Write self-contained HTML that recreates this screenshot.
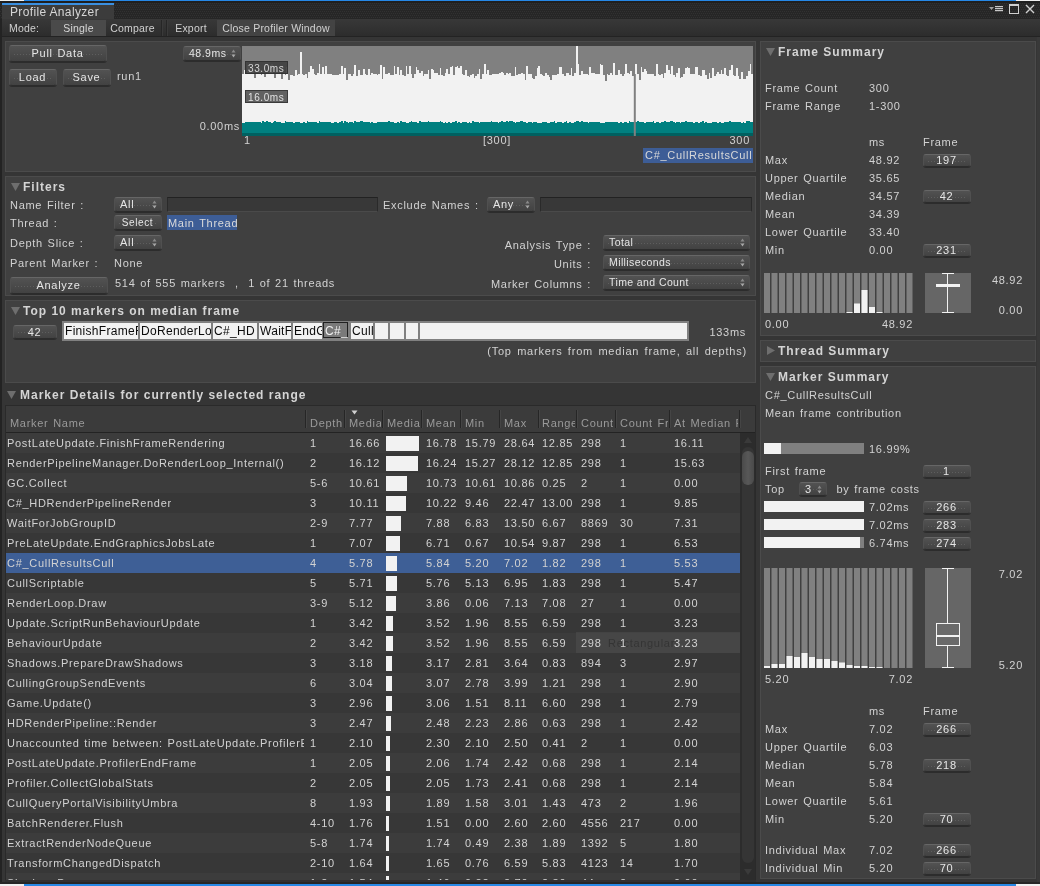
<!DOCTYPE html><html><head><meta charset="utf-8"><style>
*{margin:0;padding:0;box-sizing:border-box}
html,body{width:1040px;height:886px;overflow:hidden;background:#353535}
body{position:relative;font-family:"Liberation Sans",sans-serif}
.r{position:absolute}
.t,.t10,.t10b,.t11b,.t12,.tb,.cell{position:absolute;white-space:pre;font-family:"Liberation Sans",sans-serif}
.t{font-size:11px;line-height:11px;letter-spacing:0.7px;word-spacing:1px}
.t12{font-size:12px;line-height:11px;letter-spacing:0.35px}
.t11b{font-size:10.5px;line-height:11px;letter-spacing:0.2px}
.t10{font-size:10px;line-height:11px;letter-spacing:0.6px}
.t105{position:absolute;white-space:pre;font-size:10.5px;line-height:11px;letter-spacing:0.5px}
.t10b{font-size:10.5px;line-height:11px;letter-spacing:0.4px}
.tb{font-size:12px;line-height:11px;letter-spacing:1.0px;font-weight:bold}
.hdr{overflow:hidden}
.cell{font-size:12px;line-height:16px;overflow:hidden;padding-left:1px;letter-spacing:0.3px}
.panel{position:absolute;border:1px solid #4b4b4b;background:#404040}
.btn{position:absolute;border-radius:3px;background:linear-gradient(#525252,#4a4a4a 50%,#424242);border:1px solid #5a5a5a;border-color:#666 #505050 #2c2c2c #505050;box-shadow:0 1px 0 rgba(0,0,0,0.3)}
.btn::after{content:'';position:absolute;left:4px;right:4px;top:50%;height:1px;background:repeating-linear-gradient(90deg,#5e5e5e 0 1px,transparent 1px 3px)}
.field{position:absolute;background:#383838;border:1px solid #2a2a2a;border-top-color:#222;border-bottom-color:#4a4a4a}
.boxbg{background:#666}
</style></head><body><div id="root" style="position:absolute;left:0;top:0;width:1040px;height:886px;will-change:transform"><div class="r" style="left:0px;top:0px;width:1040px;height:19px;background:#262626;"></div>
<div class="r" style="left:0px;top:0px;width:24px;height:1px;background:#f0f0f0;"></div>
<div class="r" style="left:24px;top:0px;width:992px;height:1px;background:#2688e6;"></div>
<div class="r" style="left:1016px;top:0px;width:24px;height:1px;background:#f0f0f0;"></div>
<div class="r" style="left:0px;top:1px;width:1040px;height:2px;background:#1f1f1f;"></div>
<svg class="r" style="left:0;top:3px" width="1040" height="16"><defs><pattern id="dp" width="4" height="4" patternUnits="userSpaceOnUse"><rect x="0" y="0" width="1" height="1" fill="#313131"/><rect x="2" y="0" width="1" height="1" fill="#313131"/><rect x="1" y="2" width="1" height="1" fill="#313131"/><rect x="3" y="2" width="1" height="1" fill="#313131"/></pattern></defs><rect width="1040" height="16" fill="url(#dp)" shape-rendering="crispEdges"/></svg>
<div class="r" style="left:2px;top:3px;width:112px;height:17px;background:#3c3c3c;"></div>
<div class="r" style="left:2px;top:3px;width:112px;height:2px;background:#3a8fe0;"></div>
<div class="t12" style="left:10px;top:7px;color:#d6d6d6;">Profile Analyzer</div>
<svg class="r" style="left:986px;top:2px" width="52" height="14"><path d="M3 5 L8 5 L5.5 8 Z" fill="#a0a0a0"/><rect x="9" y="4" width="8" height="1.2" fill="#c8c8c8"/><rect x="9" y="6" width="8" height="1.2" fill="#c8c8c8"/><rect x="9" y="8" width="8" height="1.2" fill="#c8c8c8"/><rect x="23.5" y="2.5" width="9" height="9" fill="none" stroke="#d0d0d0" stroke-width="1"/><rect x="23" y="2" width="10" height="2" fill="#d0d0d0"/><path d="M40 3 L48 11 M48 3 L40 11" stroke="#d0d0d0" stroke-width="1.4"/></svg>
<div class="r" style="left:0;top:19px;width:1040px;height:18px;background:linear-gradient(#383838,#2c2c2c)"></div>
<div class="r" style="left:0px;top:36px;width:1040px;height:1px;background:#232323;"></div>
<div class="r" style="left:51px;top:20px;width:55px;height:16px;background:#4a4a4a;"></div>
<div class="r" style="left:217px;top:20px;width:118px;height:16px;background:#434343;"></div>
<div class="r" style="left:161px;top:20px;width:1px;height:16px;background:#262626;"></div>
<div class="r" style="left:162px;top:20px;width:1px;height:16px;background:#3a3a3a;"></div>
<div class="r" style="left:166px;top:20px;width:1px;height:16px;background:#262626;"></div>
<div class="r" style="left:167px;top:20px;width:1px;height:16px;background:#3a3a3a;"></div>
<div class="t11b" style="left:9px;top:23px;color:#d0d0d0;">Mode:</div>
<div class="t11b" style="left:-71.5px;width:300px;text-align:center;top:23px;color:#d8d8d8;">Single</div>
<div class="t11b" style="left:-17.5px;width:300px;text-align:center;top:23px;color:#d0d0d0;">Compare</div>
<div class="t11b" style="left:41px;width:300px;text-align:center;top:23px;color:#d0d0d0;">Export</div>
<div class="t11b" style="left:126px;width:300px;text-align:center;top:23px;color:#d0d0d0;">Close Profiler Window</div>
<div class="r" style="left:0px;top:19px;width:2px;height:867px;background:#232323;"></div>
<div class="r" style="left:1037px;top:37px;width:3px;height:845px;background:#393939;"></div>
<div class="panel" style="left:5px;top:41px;width:751px;height:131px;"></div>
<div class="btn" style="left:9px;top:45px;width:98px;height:17px;"></div>
<div class="t" style="left:-92.5px;width:300px;text-align:center;top:48px;color:#e6e6e6;">Pull Data</div>
<div class="btn" style="left:9px;top:69px;width:48px;height:17px;"></div>
<div class="t" style="left:-117.5px;width:300px;text-align:center;top:72px;color:#e6e6e6;">Load</div>
<div class="btn" style="left:63px;top:69px;width:48px;height:17px;"></div>
<div class="t" style="left:-63.5px;width:300px;text-align:center;top:72px;color:#e6e6e6;">Save</div>
<div class="t" style="left:117px;top:71px;color:#d2d2d2;">run1</div>
<div class="btn" style="left:183px;top:46px;width:58px;height:15px;"></div>
<div class="t105" style="left:189px;top:48px;color:#e6e6e6;">48.9ms</div>
<svg class="r" style="left:230.5px;top:49.0px" width="5" height="9"><path d="M0.5 3.5 L2.5 0.5 L4.5 3.5 Z" fill="#8a8a8a"/><path d="M0.5 5.5 L2.5 8.5 L4.5 5.5 Z" fill="#a8a8a8"/></svg>
<div class="t" style="left:-60px;width:300px;text-align:right;top:121px;color:#d2d2d2;">0.00ms</div>
<div class="r" style="left:242px;top:46px;width:511px;height:90px;background:#808080;"></div>
<svg class="r" style="left:0;top:0" width="1040" height="170"><path d="M242 133 L242.00 73.50 L243.70 73.50 L243.70 69.50 L245.41 69.50 L245.41 73.50 L247.11 73.50 L247.11 64.50 L248.81 64.50 L248.81 65.50 L250.52 65.50 L250.52 73.50 L252.22 73.50 L252.22 69.50 L253.92 69.50 L253.92 77.50 L255.63 77.50 L255.63 72.50 L257.33 72.50 L257.33 73.50 L259.03 73.50 L259.03 69.50 L260.74 69.50 L260.74 74.50 L262.44 74.50 L262.44 73.50 L264.14 73.50 L264.14 76.50 L265.85 76.50 L265.85 73.50 L267.55 73.50 L267.55 73.50 L269.25 73.50 L269.25 64.50 L270.96 64.50 L270.96 63.50 L272.66 63.50 L272.66 73.50 L274.36 73.50 L274.36 77.50 L276.07 77.50 L276.07 70.00 L277.77 70.00 L277.77 74.00 L279.47 74.00 L279.47 73.50 L281.18 73.50 L281.18 79.00 L282.88 79.00 L282.88 73.50 L284.58 73.50 L284.58 74.50 L286.29 74.50 L286.29 66.50 L287.99 66.50 L287.99 79.50 L289.69 79.50 L289.69 74.50 L291.40 74.50 L291.40 74.50 L293.10 74.50 L293.10 75.50 L294.80 75.50 L294.80 69.50 L296.51 69.50 L296.51 74.50 L298.21 74.50 L298.21 74.00 L299.91 74.00 L299.91 52.00 L301.62 52.00 L301.62 73.50 L303.32 73.50 L303.32 74.50 L305.02 74.50 L305.02 74.00 L306.73 74.00 L306.73 77.50 L308.43 77.50 L308.43 71.50 L310.13 71.50 L310.13 66.00 L311.84 66.00 L311.84 68.50 L313.54 68.50 L313.54 73.50 L315.24 73.50 L315.24 74.50 L316.95 74.50 L316.95 72.50 L318.65 72.50 L318.65 64.00 L320.35 64.00 L320.35 74.00 L322.06 74.00 L322.06 66.50 L323.76 66.50 L323.76 74.00 L325.46 74.00 L325.46 65.50 L327.17 65.50 L327.17 73.50 L328.87 73.50 L328.87 73.50 L330.57 73.50 L330.57 73.50 L332.28 73.50 L332.28 74.50 L333.98 74.50 L333.98 74.50 L335.68 74.50 L335.68 74.50 L337.39 74.50 L337.39 74.50 L339.09 74.50 L339.09 73.50 L340.79 73.50 L340.79 66.00 L342.50 66.00 L342.50 73.50 L344.20 73.50 L344.20 67.50 L345.90 67.50 L345.90 79.50 L347.61 79.50 L347.61 74.00 L349.31 74.00 L349.31 73.50 L351.01 73.50 L351.01 75.50 L352.72 75.50 L352.72 74.00 L354.42 74.00 L354.42 64.50 L356.12 64.50 L356.12 75.50 L357.83 75.50 L357.83 69.50 L359.53 69.50 L359.53 74.50 L361.23 74.50 L361.23 74.50 L362.94 74.50 L362.94 68.50 L364.64 68.50 L364.64 73.50 L366.34 73.50 L366.34 74.50 L368.05 74.50 L368.05 68.50 L369.75 68.50 L369.75 74.50 L371.45 74.50 L371.45 72.50 L373.16 72.50 L373.16 73.50 L374.86 73.50 L374.86 74.00 L376.56 74.00 L376.56 74.50 L378.27 74.50 L378.27 74.00 L379.97 74.00 L379.97 64.50 L381.67 64.50 L381.67 78.50 L383.38 78.50 L383.38 66.50 L385.08 66.50 L385.08 73.50 L386.78 73.50 L386.78 73.50 L388.49 73.50 L388.49 72.50 L390.19 72.50 L390.19 74.50 L391.89 74.50 L391.89 74.50 L393.60 74.50 L393.60 65.50 L395.30 65.50 L395.30 73.50 L397.00 73.50 L397.00 66.50 L398.71 66.50 L398.71 74.50 L400.41 74.50 L400.41 69.50 L402.11 69.50 L402.11 74.50 L403.82 74.50 L403.82 75.50 L405.52 75.50 L405.52 65.50 L407.22 65.50 L407.22 73.50 L408.93 73.50 L408.93 65.50 L410.63 65.50 L410.63 73.50 L412.33 73.50 L412.33 77.50 L414.04 77.50 L414.04 73.50 L415.74 73.50 L415.74 66.50 L417.44 66.50 L417.44 69.50 L419.15 69.50 L419.15 72.50 L420.85 72.50 L420.85 70.50 L422.55 70.50 L422.55 75.50 L424.26 75.50 L424.26 73.50 L425.96 73.50 L425.96 73.50 L427.66 73.50 L427.66 69.50 L429.37 69.50 L429.37 78.50 L431.07 78.50 L431.07 68.50 L432.77 68.50 L432.77 69.50 L434.48 69.50 L434.48 72.50 L436.18 72.50 L436.18 72.50 L437.88 72.50 L437.88 74.50 L439.59 74.50 L439.59 67.50 L441.29 67.50 L441.29 74.50 L442.99 74.50 L442.99 75.50 L444.70 75.50 L444.70 72.50 L446.40 72.50 L446.40 68.50 L448.10 68.50 L448.10 73.50 L449.81 73.50 L449.81 66.50 L451.51 66.50 L451.51 65.50 L453.21 65.50 L453.21 74.50 L454.92 74.50 L454.92 67.00 L456.62 67.00 L456.62 65.50 L458.32 65.50 L458.32 67.50 L460.03 67.50 L460.03 65.50 L461.73 65.50 L461.73 73.50 L463.43 73.50 L463.43 74.50 L465.14 74.50 L465.14 69.50 L466.84 69.50 L466.84 75.50 L468.54 75.50 L468.54 76.50 L470.25 76.50 L470.25 74.50 L471.95 74.50 L471.95 73.50 L473.65 73.50 L473.65 77.50 L475.36 77.50 L475.36 75.50 L477.06 75.50 L477.06 73.50 L478.76 73.50 L478.76 68.50 L480.47 68.50 L480.47 78.50 L482.17 78.50 L482.17 73.50 L483.87 73.50 L483.87 64.00 L485.58 64.00 L485.58 73.50 L487.28 73.50 L487.28 70.00 L488.98 70.00 L488.98 74.50 L490.69 74.50 L490.69 74.50 L492.39 74.50 L492.39 74.00 L494.09 74.00 L494.09 74.00 L495.80 74.00 L495.80 73.50 L497.50 73.50 L497.50 73.50 L499.20 73.50 L499.20 72.50 L500.91 72.50 L500.91 71.50 L502.61 71.50 L502.61 72.50 L504.31 72.50 L504.31 74.50 L506.02 74.50 L506.02 72.50 L507.72 72.50 L507.72 73.50 L509.42 73.50 L509.42 72.50 L511.13 72.50 L511.13 75.50 L512.83 75.50 L512.83 75.50 L514.53 75.50 L514.53 66.50 L516.24 66.50 L516.24 74.50 L517.94 74.50 L517.94 73.50 L519.64 73.50 L519.64 74.00 L521.35 74.00 L521.35 72.50 L523.05 72.50 L523.05 74.00 L524.75 74.00 L524.75 79.50 L526.46 79.50 L526.46 65.50 L528.16 65.50 L528.16 73.50 L529.86 73.50 L529.86 73.50 L531.57 73.50 L531.57 77.50 L533.27 77.50 L533.27 78.50 L534.97 78.50 L534.97 75.50 L536.68 75.50 L536.68 67.50 L538.38 67.50 L538.38 65.50 L540.08 65.50 L540.08 73.50 L541.79 73.50 L541.79 74.50 L543.49 74.50 L543.49 75.50 L545.19 75.50 L545.19 72.50 L546.90 72.50 L546.90 74.50 L548.60 74.50 L548.60 76.50 L550.30 76.50 L550.30 79.50 L552.01 79.50 L552.01 74.50 L553.71 74.50 L553.71 74.50 L555.41 74.50 L555.41 74.50 L557.12 74.50 L557.12 74.00 L558.82 74.00 L558.82 66.50 L560.52 66.50 L560.52 66.50 L562.23 66.50 L562.23 73.50 L563.93 73.50 L563.93 75.50 L565.63 75.50 L565.63 72.50 L567.34 72.50 L567.34 72.50 L569.04 72.50 L569.04 74.50 L570.74 74.50 L570.74 67.50 L572.45 67.50 L572.45 75.50 L574.15 75.50 L574.15 72.50 L575.85 72.50 L575.85 46.00 L577.56 46.00 L577.56 63.50 L579.26 63.50 L579.26 74.50 L580.96 74.50 L580.96 70.50 L582.67 70.50 L582.67 73.50 L584.37 73.50 L584.37 73.50 L586.07 73.50 L586.07 73.50 L587.78 73.50 L587.78 74.50 L589.48 74.50 L589.48 66.50 L591.18 66.50 L591.18 72.50 L592.89 72.50 L592.89 72.50 L594.59 72.50 L594.59 73.50 L596.29 73.50 L596.29 74.00 L598.00 74.00 L598.00 73.50 L599.70 73.50 L599.70 63.50 L601.40 63.50 L601.40 64.50 L603.11 64.50 L603.11 74.50 L604.81 74.50 L604.81 80.50 L606.51 80.50 L606.51 73.50 L608.22 73.50 L608.22 74.50 L609.92 74.50 L609.92 72.50 L611.62 72.50 L611.62 74.50 L613.33 74.50 L613.33 62.50 L615.03 62.50 L615.03 74.50 L616.73 74.50 L616.73 74.50 L618.44 74.50 L618.44 69.50 L620.14 69.50 L620.14 73.50 L621.84 73.50 L621.84 75.50 L623.55 75.50 L623.55 73.50 L625.25 73.50 L625.25 63.50 L626.95 63.50 L626.95 72.50 L628.66 72.50 L628.66 73.50 L630.36 73.50 L630.36 70.50 L632.06 70.50 L632.06 75.50 L633.77 75.50 L633.77 133.00 L635.47 133.00 L635.47 63.50 L637.17 63.50 L637.17 73.50 L638.88 73.50 L638.88 79.50 L640.58 79.50 L640.58 66.50 L642.28 66.50 L642.28 71.50 L643.99 71.50 L643.99 68.50 L645.69 68.50 L645.69 70.50 L647.39 70.50 L647.39 73.50 L649.10 73.50 L649.10 73.50 L650.80 73.50 L650.80 73.50 L652.50 73.50 L652.50 74.00 L654.21 74.00 L654.21 75.50 L655.91 75.50 L655.91 64.00 L657.61 64.00 L657.61 73.50 L659.32 73.50 L659.32 74.50 L661.02 74.50 L661.02 73.50 L662.72 73.50 L662.72 77.50 L664.43 77.50 L664.43 72.50 L666.13 72.50 L666.13 64.50 L667.83 64.50 L667.83 69.50 L669.54 69.50 L669.54 73.50 L671.24 73.50 L671.24 65.50 L672.94 65.50 L672.94 74.50 L674.65 74.50 L674.65 76.50 L676.35 76.50 L676.35 72.50 L678.05 72.50 L678.05 68.00 L679.76 68.00 L679.76 77.50 L681.46 77.50 L681.46 76.50 L683.16 76.50 L683.16 73.50 L684.87 73.50 L684.87 67.50 L686.57 67.50 L686.57 66.50 L688.27 66.50 L688.27 67.50 L689.98 67.50 L689.98 73.50 L691.68 73.50 L691.68 74.00 L693.38 74.00 L693.38 73.50 L695.09 73.50 L695.09 66.50 L696.79 66.50 L696.79 66.50 L698.49 66.50 L698.49 74.50 L700.20 74.50 L700.20 75.50 L701.90 75.50 L701.90 69.50 L703.60 69.50 L703.60 70.00 L705.31 70.00 L705.31 74.50 L707.01 74.50 L707.01 78.50 L708.71 78.50 L708.71 72.50 L710.42 72.50 L710.42 77.50 L712.12 77.50 L712.12 67.50 L713.82 67.50 L713.82 75.50 L715.53 75.50 L715.53 73.50 L717.23 73.50 L717.23 71.50 L718.93 71.50 L718.93 73.50 L720.64 73.50 L720.64 69.50 L722.34 69.50 L722.34 73.50 L724.04 73.50 L724.04 67.50 L725.75 67.50 L725.75 74.50 L727.45 74.50 L727.45 75.50 L729.15 75.50 L729.15 69.50 L730.86 69.50 L730.86 64.50 L732.56 64.50 L732.56 74.50 L734.26 74.50 L734.26 75.50 L735.97 75.50 L735.97 68.00 L737.67 68.00 L737.67 75.50 L739.37 75.50 L739.37 78.50 L741.08 78.50 L741.08 71.50 L742.78 71.50 L742.78 78.50 L744.48 78.50 L744.48 78.50 L746.19 78.50 L746.19 75.50 L747.89 75.50 L747.89 71.00 L749.59 71.00 L749.59 64.00 L751.30 64.00 L751.30 74.00 L753.00 74.00 L753 133 Z" fill="#f2f2f2" shape-rendering="crispEdges"/><path d="M242 133 L242.00 123.00 L243.70 123.00 L243.70 123.00 L245.41 123.00 L245.41 122.00 L247.11 122.00 L247.11 122.00 L248.81 122.00 L248.81 122.00 L250.52 122.00 L250.52 122.00 L252.22 122.00 L252.22 122.00 L253.92 122.00 L253.92 122.00 L255.63 122.00 L255.63 122.00 L257.33 122.00 L257.33 122.00 L259.03 122.00 L259.03 122.00 L260.74 122.00 L260.74 123.00 L262.44 123.00 L262.44 121.00 L264.14 121.00 L264.14 122.00 L265.85 122.00 L265.85 121.00 L267.55 121.00 L267.55 122.00 L269.25 122.00 L269.25 122.00 L270.96 122.00 L270.96 123.00 L272.66 123.00 L272.66 122.00 L274.36 122.00 L274.36 121.00 L276.07 121.00 L276.07 122.00 L277.77 122.00 L277.77 122.00 L279.47 122.00 L279.47 122.00 L281.18 122.00 L281.18 123.00 L282.88 123.00 L282.88 123.00 L284.58 123.00 L284.58 121.00 L286.29 121.00 L286.29 122.00 L287.99 122.00 L287.99 122.00 L289.69 122.00 L289.69 122.00 L291.40 122.00 L291.40 122.00 L293.10 122.00 L293.10 123.00 L294.80 123.00 L294.80 122.00 L296.51 122.00 L296.51 122.00 L298.21 122.00 L298.21 122.00 L299.91 122.00 L299.91 123.00 L301.62 123.00 L301.62 123.00 L303.32 123.00 L303.32 122.00 L305.02 122.00 L305.02 123.00 L306.73 123.00 L306.73 121.00 L308.43 121.00 L308.43 122.00 L310.13 122.00 L310.13 122.00 L311.84 122.00 L311.84 122.00 L313.54 122.00 L313.54 122.00 L315.24 122.00 L315.24 122.00 L316.95 122.00 L316.95 123.00 L318.65 123.00 L318.65 121.00 L320.35 121.00 L320.35 122.00 L322.06 122.00 L322.06 122.00 L323.76 122.00 L323.76 122.00 L325.46 122.00 L325.46 122.00 L327.17 122.00 L327.17 122.00 L328.87 122.00 L328.87 122.00 L330.57 122.00 L330.57 123.00 L332.28 123.00 L332.28 123.00 L333.98 123.00 L333.98 122.00 L335.68 122.00 L335.68 122.00 L337.39 122.00 L337.39 123.00 L339.09 123.00 L339.09 122.00 L340.79 122.00 L340.79 121.00 L342.50 121.00 L342.50 123.00 L344.20 123.00 L344.20 121.00 L345.90 121.00 L345.90 122.00 L347.61 122.00 L347.61 123.00 L349.31 123.00 L349.31 122.00 L351.01 122.00 L351.01 122.00 L352.72 122.00 L352.72 123.00 L354.42 123.00 L354.42 121.00 L356.12 121.00 L356.12 122.00 L357.83 122.00 L357.83 122.00 L359.53 122.00 L359.53 121.00 L361.23 121.00 L361.23 121.00 L362.94 121.00 L362.94 122.00 L364.64 122.00 L364.64 122.00 L366.34 122.00 L366.34 122.00 L368.05 122.00 L368.05 122.00 L369.75 122.00 L369.75 123.00 L371.45 123.00 L371.45 122.00 L373.16 122.00 L373.16 123.00 L374.86 123.00 L374.86 123.00 L376.56 123.00 L376.56 122.00 L378.27 122.00 L378.27 122.00 L379.97 122.00 L379.97 122.00 L381.67 122.00 L381.67 122.00 L383.38 122.00 L383.38 122.00 L385.08 122.00 L385.08 122.00 L386.78 122.00 L386.78 122.00 L388.49 122.00 L388.49 121.00 L390.19 121.00 L390.19 122.00 L391.89 122.00 L391.89 122.00 L393.60 122.00 L393.60 123.00 L395.30 123.00 L395.30 123.00 L397.00 123.00 L397.00 122.00 L398.71 122.00 L398.71 123.00 L400.41 123.00 L400.41 121.00 L402.11 121.00 L402.11 122.00 L403.82 122.00 L403.82 122.00 L405.52 122.00 L405.52 123.00 L407.22 123.00 L407.22 123.00 L408.93 123.00 L408.93 122.00 L410.63 122.00 L410.63 121.00 L412.33 121.00 L412.33 122.00 L414.04 122.00 L414.04 122.00 L415.74 122.00 L415.74 122.00 L417.44 122.00 L417.44 123.00 L419.15 123.00 L419.15 121.00 L420.85 121.00 L420.85 122.00 L422.55 122.00 L422.55 122.00 L424.26 122.00 L424.26 122.00 L425.96 122.00 L425.96 122.00 L427.66 122.00 L427.66 121.00 L429.37 121.00 L429.37 122.00 L431.07 122.00 L431.07 122.00 L432.77 122.00 L432.77 122.00 L434.48 122.00 L434.48 122.00 L436.18 122.00 L436.18 122.00 L437.88 122.00 L437.88 122.00 L439.59 122.00 L439.59 121.00 L441.29 121.00 L441.29 122.00 L442.99 122.00 L442.99 123.00 L444.70 123.00 L444.70 122.00 L446.40 122.00 L446.40 123.00 L448.10 123.00 L448.10 122.00 L449.81 122.00 L449.81 123.00 L451.51 123.00 L451.51 122.00 L453.21 122.00 L453.21 122.00 L454.92 122.00 L454.92 121.00 L456.62 121.00 L456.62 123.00 L458.32 123.00 L458.32 122.00 L460.03 122.00 L460.03 123.00 L461.73 123.00 L461.73 122.00 L463.43 122.00 L463.43 122.00 L465.14 122.00 L465.14 122.00 L466.84 122.00 L466.84 123.00 L468.54 123.00 L468.54 122.00 L470.25 122.00 L470.25 123.00 L471.95 123.00 L471.95 121.00 L473.65 121.00 L473.65 122.00 L475.36 122.00 L475.36 122.00 L477.06 122.00 L477.06 122.00 L478.76 122.00 L478.76 123.00 L480.47 123.00 L480.47 122.00 L482.17 122.00 L482.17 122.00 L483.87 122.00 L483.87 122.00 L485.58 122.00 L485.58 122.00 L487.28 122.00 L487.28 122.00 L488.98 122.00 L488.98 122.00 L490.69 122.00 L490.69 121.00 L492.39 121.00 L492.39 122.00 L494.09 122.00 L494.09 122.00 L495.80 122.00 L495.80 122.00 L497.50 122.00 L497.50 123.00 L499.20 123.00 L499.20 122.00 L500.91 122.00 L500.91 121.00 L502.61 121.00 L502.61 122.00 L504.31 122.00 L504.31 122.00 L506.02 122.00 L506.02 121.00 L507.72 121.00 L507.72 122.00 L509.42 122.00 L509.42 121.00 L511.13 121.00 L511.13 121.00 L512.83 121.00 L512.83 122.00 L514.53 122.00 L514.53 123.00 L516.24 123.00 L516.24 122.00 L517.94 122.00 L517.94 122.00 L519.64 122.00 L519.64 121.00 L521.35 121.00 L521.35 121.00 L523.05 121.00 L523.05 122.00 L524.75 122.00 L524.75 122.00 L526.46 122.00 L526.46 123.00 L528.16 123.00 L528.16 122.00 L529.86 122.00 L529.86 122.00 L531.57 122.00 L531.57 123.00 L533.27 123.00 L533.27 122.00 L534.97 122.00 L534.97 122.00 L536.68 122.00 L536.68 123.00 L538.38 123.00 L538.38 123.00 L540.08 123.00 L540.08 123.00 L541.79 123.00 L541.79 122.00 L543.49 122.00 L543.49 122.00 L545.19 122.00 L545.19 122.00 L546.90 122.00 L546.90 123.00 L548.60 123.00 L548.60 123.00 L550.30 123.00 L550.30 122.00 L552.01 122.00 L552.01 122.00 L553.71 122.00 L553.71 121.00 L555.41 121.00 L555.41 123.00 L557.12 123.00 L557.12 122.00 L558.82 122.00 L558.82 122.00 L560.52 122.00 L560.52 122.00 L562.23 122.00 L562.23 123.00 L563.93 123.00 L563.93 122.00 L565.63 122.00 L565.63 121.00 L567.34 121.00 L567.34 123.00 L569.04 123.00 L569.04 122.00 L570.74 122.00 L570.74 123.00 L572.45 123.00 L572.45 123.00 L574.15 123.00 L574.15 122.00 L575.85 122.00 L575.85 121.00 L577.56 121.00 L577.56 121.00 L579.26 121.00 L579.26 122.00 L580.96 122.00 L580.96 121.00 L582.67 121.00 L582.67 122.00 L584.37 122.00 L584.37 122.00 L586.07 122.00 L586.07 122.00 L587.78 122.00 L587.78 123.00 L589.48 123.00 L589.48 122.00 L591.18 122.00 L591.18 122.00 L592.89 122.00 L592.89 122.00 L594.59 122.00 L594.59 122.00 L596.29 122.00 L596.29 122.00 L598.00 122.00 L598.00 122.00 L599.70 122.00 L599.70 123.00 L601.40 123.00 L601.40 123.00 L603.11 123.00 L603.11 123.00 L604.81 123.00 L604.81 122.00 L606.51 122.00 L606.51 122.00 L608.22 122.00 L608.22 122.00 L609.92 122.00 L609.92 122.00 L611.62 122.00 L611.62 122.00 L613.33 122.00 L613.33 122.00 L615.03 122.00 L615.03 122.00 L616.73 122.00 L616.73 122.00 L618.44 122.00 L618.44 123.00 L620.14 123.00 L620.14 122.00 L621.84 122.00 L621.84 123.00 L623.55 123.00 L623.55 122.00 L625.25 122.00 L625.25 122.00 L626.95 122.00 L626.95 123.00 L628.66 123.00 L628.66 121.00 L630.36 121.00 L630.36 122.00 L632.06 122.00 L632.06 122.00 L633.77 122.00 L633.77 133.00 L635.47 133.00 L635.47 122.00 L637.17 122.00 L637.17 121.00 L638.88 121.00 L638.88 122.00 L640.58 122.00 L640.58 122.00 L642.28 122.00 L642.28 122.00 L643.99 122.00 L643.99 123.00 L645.69 123.00 L645.69 122.00 L647.39 122.00 L647.39 122.00 L649.10 122.00 L649.10 122.00 L650.80 122.00 L650.80 122.00 L652.50 122.00 L652.50 121.00 L654.21 121.00 L654.21 123.00 L655.91 123.00 L655.91 122.00 L657.61 122.00 L657.61 122.00 L659.32 122.00 L659.32 123.00 L661.02 123.00 L661.02 122.00 L662.72 122.00 L662.72 122.00 L664.43 122.00 L664.43 121.00 L666.13 121.00 L666.13 122.00 L667.83 122.00 L667.83 122.00 L669.54 122.00 L669.54 121.00 L671.24 121.00 L671.24 121.00 L672.94 121.00 L672.94 122.00 L674.65 122.00 L674.65 123.00 L676.35 123.00 L676.35 122.00 L678.05 122.00 L678.05 122.00 L679.76 122.00 L679.76 123.00 L681.46 123.00 L681.46 122.00 L683.16 122.00 L683.16 122.00 L684.87 122.00 L684.87 121.00 L686.57 121.00 L686.57 122.00 L688.27 122.00 L688.27 122.00 L689.98 122.00 L689.98 122.00 L691.68 122.00 L691.68 122.00 L693.38 122.00 L693.38 123.00 L695.09 123.00 L695.09 122.00 L696.79 122.00 L696.79 122.00 L698.49 122.00 L698.49 123.00 L700.20 123.00 L700.20 122.00 L701.90 122.00 L701.90 121.00 L703.60 121.00 L703.60 123.00 L705.31 123.00 L705.31 122.00 L707.01 122.00 L707.01 123.00 L708.71 123.00 L708.71 123.00 L710.42 123.00 L710.42 123.00 L712.12 123.00 L712.12 122.00 L713.82 122.00 L713.82 122.00 L715.53 122.00 L715.53 122.00 L717.23 122.00 L717.23 123.00 L718.93 123.00 L718.93 122.00 L720.64 122.00 L720.64 123.00 L722.34 123.00 L722.34 123.00 L724.04 123.00 L724.04 122.00 L725.75 122.00 L725.75 122.00 L727.45 122.00 L727.45 122.00 L729.15 122.00 L729.15 121.00 L730.86 121.00 L730.86 122.00 L732.56 122.00 L732.56 122.00 L734.26 122.00 L734.26 122.00 L735.97 122.00 L735.97 122.00 L737.67 122.00 L737.67 122.00 L739.37 122.00 L739.37 122.00 L741.08 122.00 L741.08 123.00 L742.78 123.00 L742.78 122.00 L744.48 122.00 L744.48 123.00 L746.19 123.00 L746.19 121.00 L747.89 121.00 L747.89 121.00 L749.59 121.00 L749.59 122.00 L751.30 122.00 L751.30 122.00 L753.00 122.00 L753 133 Z" fill="#008080" shape-rendering="crispEdges"/><rect x="242" y="133" width="511" height="3" fill="#006060"/><rect x="633.8" y="74" width="2" height="62" fill="#808080"/></svg>
<div class="r" style="left:245px;top:61px;width:43px;height:13px;background:rgba(64,64,64,0.92);border:1px solid #333"></div>
<div class="t10" style="left:248px;top:63px;color:#d8d8d8;">33.0ms</div>
<div class="r" style="left:245px;top:90px;width:43px;height:13px;background:rgba(88,88,88,0.95);border:1px solid #3a3a3a"></div>
<div class="t10" style="left:248px;top:92px;color:#e0e0e0;">16.0ms</div>
<div class="t" style="left:244px;top:135px;color:#d2d2d2;">1</div>
<div class="t" style="left:347px;width:300px;text-align:center;top:135px;color:#d2d2d2;">[300]</div>
<div class="t" style="left:450px;width:300px;text-align:right;top:135px;color:#d2d2d2;">300</div>
<div class="r" style="left:643px;top:148px;width:110px;height:15px;background:#3d5d96;"></div>
<div class="t" style="left:645px;top:150px;color:#d8d8d8;">C#_CullResultsCull</div>
<div class="panel" style="left:5px;top:176px;width:751px;height:120px;"></div>
<svg class="r" style="left:11px;top:183px" width="10" height="9"><path d="M0 0 L9 0 L4.5 8 Z" fill="#6e6e6e"/></svg>
<div class="tb" style="left:23px;top:182px;color:#d4d4d4;">Filters</div>
<div class="t" style="left:10px;top:200px;color:#d2d2d2;">Name Filter :</div>
<div class="btn" style="left:114px;top:197px;width:48px;height:15px;"></div>
<div class="t" style="left:120px;top:199px;color:#e6e6e6;">All</div>
<svg class="r" style="left:151.5px;top:200.0px" width="5" height="9"><path d="M0.5 3.5 L2.5 0.5 L4.5 3.5 Z" fill="#8a8a8a"/><path d="M0.5 5.5 L2.5 8.5 L4.5 5.5 Z" fill="#a8a8a8"/></svg>
<div class="field" style="left:167px;top:197px;width:211px;height:15px"></div>
<div class="t" style="left:383px;top:200px;color:#d2d2d2;">Exclude Names :</div>
<div class="btn" style="left:487px;top:197px;width:48px;height:15px;"></div>
<div class="t" style="left:493px;top:199px;color:#e6e6e6;">Any</div>
<svg class="r" style="left:524.5px;top:200.0px" width="5" height="9"><path d="M0.5 3.5 L2.5 0.5 L4.5 3.5 Z" fill="#8a8a8a"/><path d="M0.5 5.5 L2.5 8.5 L4.5 5.5 Z" fill="#a8a8a8"/></svg>
<div class="field" style="left:540px;top:197px;width:212px;height:15px"></div>
<div class="t" style="left:10px;top:218px;color:#d2d2d2;">Thread :</div>
<div class="btn" style="left:114px;top:215px;width:48px;height:15px;"></div>
<div class="t10" style="left:-12.5px;width:300px;text-align:center;top:217px;color:#e6e6e6;">Select</div>
<div class="r" style="left:167px;top:215px;width:70px;height:15px;background:#3d5d96;"></div>
<div class="t" style="left:168px;top:218px;color:#dadada;">Main Thread</div>
<div class="t" style="left:10px;top:238px;color:#d2d2d2;">Depth Slice :</div>
<div class="btn" style="left:114px;top:235px;width:48px;height:15px;"></div>
<div class="t" style="left:120px;top:237px;color:#e6e6e6;">All</div>
<svg class="r" style="left:151.5px;top:238.0px" width="5" height="9"><path d="M0.5 3.5 L2.5 0.5 L4.5 3.5 Z" fill="#8a8a8a"/><path d="M0.5 5.5 L2.5 8.5 L4.5 5.5 Z" fill="#a8a8a8"/></svg>
<div class="t" style="left:10px;top:258px;color:#d2d2d2;">Parent Marker :</div>
<div class="t" style="left:114px;top:258px;color:#d2d2d2;">None</div>
<div class="btn" style="left:10px;top:277px;width:98px;height:17px;"></div>
<div class="t" style="left:-91.5px;width:300px;text-align:center;top:280px;color:#e6e6e6;">Analyze</div>
<div class="t" style="left:115px;top:278px;color:#d2d2d2;">514 of 555 markers &nbsp;, &nbsp;1 of 21 threads</div>
<div class="t" style="left:291px;width:300px;text-align:right;top:240px;color:#d2d2d2;">Analysis Type :</div>
<div class="btn" style="left:603px;top:235px;width:147px;height:15px;"></div>
<div class="t10b" style="left:609px;top:237px;color:#e6e6e6;">Total</div>
<svg class="r" style="left:739.5px;top:238.0px" width="5" height="9"><path d="M0.5 3.5 L2.5 0.5 L4.5 3.5 Z" fill="#8a8a8a"/><path d="M0.5 5.5 L2.5 8.5 L4.5 5.5 Z" fill="#a8a8a8"/></svg>
<div class="t" style="left:291px;width:300px;text-align:right;top:259px;color:#d2d2d2;">Units :</div>
<div class="btn" style="left:603px;top:255px;width:147px;height:15px;"></div>
<div class="t10b" style="left:609px;top:257px;color:#e6e6e6;">Milliseconds</div>
<svg class="r" style="left:739.5px;top:258.0px" width="5" height="9"><path d="M0.5 3.5 L2.5 0.5 L4.5 3.5 Z" fill="#8a8a8a"/><path d="M0.5 5.5 L2.5 8.5 L4.5 5.5 Z" fill="#a8a8a8"/></svg>
<div class="t" style="left:291px;width:300px;text-align:right;top:279px;color:#d2d2d2;">Marker Columns :</div>
<div class="btn" style="left:603px;top:275px;width:147px;height:15px;"></div>
<div class="t10b" style="left:609px;top:277px;color:#e6e6e6;">Time and Count</div>
<svg class="r" style="left:739.5px;top:278.0px" width="5" height="9"><path d="M0.5 3.5 L2.5 0.5 L4.5 3.5 Z" fill="#8a8a8a"/><path d="M0.5 5.5 L2.5 8.5 L4.5 5.5 Z" fill="#a8a8a8"/></svg>
<div class="panel" style="left:5px;top:300px;width:751px;height:83px;"></div>
<svg class="r" style="left:11px;top:307px" width="10" height="9"><path d="M0 0 L9 0 L4.5 8 Z" fill="#6e6e6e"/></svg>
<div class="tb" style="left:23px;top:306px;color:#d4d4d4;">Top 10 markers on median frame</div>
<div class="btn" style="left:13px;top:325px;width:44px;height:14px;"></div>
<div class="t" style="left:-115.5px;width:300px;text-align:center;top:327px;color:#e6e6e6;">42</div>
<div class="r" style="left:62px;top:321px;width:627px;height:20px;background:#808080;"></div>
<div class="r cell" style="left:64px;top:323px;width:74px;height:16px;background:#f2f2f2;color:#0a0a0a">FinishFrameF</div>
<div class="r cell" style="left:140px;top:323px;width:71px;height:16px;background:#f2f2f2;color:#0a0a0a">DoRenderLo</div>
<div class="r cell" style="left:213px;top:323px;width:44px;height:16px;background:#f2f2f2;color:#0a0a0a">C#_HD</div>
<div class="r cell" style="left:259px;top:323px;width:32px;height:16px;background:#f2f2f2;color:#0a0a0a">WaitF</div>
<div class="r cell" style="left:293px;top:323px;width:29px;height:16px;background:#f2f2f2;color:#0a0a0a">EndG</div>
<div class="r" style="left:323px;top:322px;width:25px;height:16px;background:#7a7a7a;border:1px solid #202020"></div>
<div class="r cell" style="left:324px;top:323px;width:25px;height:16px;color:#f0f0f0">C#_</div>
<div class="r cell" style="left:351px;top:323px;width:22px;height:16px;background:#f2f2f2;color:#0a0a0a">Cull</div>
<div class="r cell" style="left:375px;top:323px;width:13px;height:16px;background:#f2f2f2;color:#0a0a0a"></div>
<div class="r cell" style="left:390px;top:323px;width:14px;height:16px;background:#f2f2f2;color:#0a0a0a"></div>
<div class="r cell" style="left:406px;top:323px;width:12px;height:16px;background:#f2f2f2;color:#0a0a0a"></div>
<div class="r cell" style="left:420px;top:323px;width:267px;height:16px;background:#f2f2f2;color:#0a0a0a"></div>
<div class="t" style="left:446px;width:300px;text-align:right;top:327px;color:#d2d2d2;">133ms</div>
<div class="t" style="left:447px;width:300px;text-align:right;top:346px;color:#d2d2d2;letter-spacing:0.8px;word-spacing:1.5px">(Top markers from median frame, all depths)</div>
<svg class="r" style="left:7px;top:391px" width="10" height="9"><path d="M0 0 L9 0 L4.5 8 Z" fill="#6e6e6e"/></svg>
<div class="tb" style="left:20px;top:390px;color:#d4d4d4;">Marker Details for currently selected range</div>
<div class="r" style="left:5px;top:405px;width:751px;height:475px;background:#2a2a2a;"></div>
<div class="r" style="left:6px;top:406px;width:749px;height:26px;background:#3b3b3b"></div>
<div class="r" style="left:6px;top:432px;width:749px;height:1px;background:#232323;"></div>
<div class="t hdr" style="left:10px;top:418px;width:294px;color:#9a9a9a">Marker Name</div>
<div class="t hdr" style="left:310px;top:418px;width:33px;color:#9a9a9a">Depth</div>
<div class="t hdr" style="left:349px;top:418px;width:32px;color:#9a9a9a">Media</div>
<div class="t hdr" style="left:387px;top:418px;width:33px;color:#9a9a9a">Media</div>
<div class="t hdr" style="left:426px;top:418px;width:33px;color:#9a9a9a">Mean</div>
<div class="t hdr" style="left:465px;top:418px;width:33px;color:#9a9a9a">Min</div>
<div class="t hdr" style="left:504px;top:418px;width:33px;color:#9a9a9a">Max</div>
<div class="t hdr" style="left:542px;top:418px;width:33px;color:#9a9a9a">Range</div>
<div class="t hdr" style="left:581px;top:418px;width:33px;color:#9a9a9a">Count</div>
<div class="t hdr" style="left:620px;top:418px;width:48px;color:#9a9a9a">Count Fr</div>
<div class="t hdr" style="left:674px;top:418px;width:64px;color:#9a9a9a">At Median F</div>
<div class="r" style="left:305px;top:410px;width:1px;height:18px;background:#262626;"></div>
<div class="r" style="left:306px;top:410px;width:1px;height:18px;background:#454545;"></div>
<div class="r" style="left:344px;top:410px;width:1px;height:18px;background:#262626;"></div>
<div class="r" style="left:345px;top:410px;width:1px;height:18px;background:#454545;"></div>
<div class="r" style="left:382px;top:410px;width:1px;height:18px;background:#262626;"></div>
<div class="r" style="left:383px;top:410px;width:1px;height:18px;background:#454545;"></div>
<div class="r" style="left:421px;top:410px;width:1px;height:18px;background:#262626;"></div>
<div class="r" style="left:422px;top:410px;width:1px;height:18px;background:#454545;"></div>
<div class="r" style="left:460px;top:410px;width:1px;height:18px;background:#262626;"></div>
<div class="r" style="left:461px;top:410px;width:1px;height:18px;background:#454545;"></div>
<div class="r" style="left:499px;top:410px;width:1px;height:18px;background:#262626;"></div>
<div class="r" style="left:500px;top:410px;width:1px;height:18px;background:#454545;"></div>
<div class="r" style="left:538px;top:410px;width:1px;height:18px;background:#262626;"></div>
<div class="r" style="left:539px;top:410px;width:1px;height:18px;background:#454545;"></div>
<div class="r" style="left:576px;top:410px;width:1px;height:18px;background:#262626;"></div>
<div class="r" style="left:577px;top:410px;width:1px;height:18px;background:#454545;"></div>
<div class="r" style="left:615px;top:410px;width:1px;height:18px;background:#262626;"></div>
<div class="r" style="left:616px;top:410px;width:1px;height:18px;background:#454545;"></div>
<div class="r" style="left:669px;top:410px;width:1px;height:18px;background:#262626;"></div>
<div class="r" style="left:670px;top:410px;width:1px;height:18px;background:#454545;"></div>
<div class="r" style="left:739px;top:410px;width:1px;height:18px;background:#262626;"></div>
<div class="r" style="left:740px;top:410px;width:1px;height:18px;background:#454545;"></div>
<svg class="r" style="left:351px;top:410px" width="8" height="6"><path d="M0.5 0.5 L6.5 0.5 L3.5 4.5 Z" fill="#d0d0d0"/></svg>
<div class="r" style="left:6px;top:433px;width:734px;height:447px;overflow:hidden">
<div class="r" style="left:0;top:0px;width:734px;height:20px;background:#3c3c3c"></div>
<div class="r" style="left:0;top:20px;width:734px;height:20px;background:#373737"></div>
<div class="r" style="left:0;top:40px;width:734px;height:20px;background:#3c3c3c"></div>
<div class="r" style="left:0;top:60px;width:734px;height:20px;background:#373737"></div>
<div class="r" style="left:0;top:80px;width:734px;height:20px;background:#3c3c3c"></div>
<div class="r" style="left:0;top:100px;width:734px;height:20px;background:#373737"></div>
<div class="r" style="left:0;top:120px;width:734px;height:20px;background:#3e5f96"></div>
<div class="r" style="left:0;top:140px;width:734px;height:20px;background:#373737"></div>
<div class="r" style="left:0;top:160px;width:734px;height:20px;background:#3c3c3c"></div>
<div class="r" style="left:0;top:180px;width:734px;height:20px;background:#373737"></div>
<div class="r" style="left:0;top:200px;width:734px;height:20px;background:#3c3c3c"></div>
<div class="r" style="left:0;top:220px;width:734px;height:20px;background:#373737"></div>
<div class="r" style="left:0;top:240px;width:734px;height:20px;background:#3c3c3c"></div>
<div class="r" style="left:0;top:260px;width:734px;height:20px;background:#373737"></div>
<div class="r" style="left:0;top:280px;width:734px;height:20px;background:#3c3c3c"></div>
<div class="r" style="left:0;top:300px;width:734px;height:20px;background:#373737"></div>
<div class="r" style="left:0;top:320px;width:734px;height:20px;background:#3c3c3c"></div>
<div class="r" style="left:0;top:340px;width:734px;height:20px;background:#373737"></div>
<div class="r" style="left:0;top:360px;width:734px;height:20px;background:#3c3c3c"></div>
<div class="r" style="left:0;top:380px;width:734px;height:20px;background:#373737"></div>
<div class="r" style="left:0;top:400px;width:734px;height:20px;background:#3c3c3c"></div>
<div class="r" style="left:0;top:420px;width:734px;height:20px;background:#373737"></div>
<div class="r" style="left:0;top:440px;width:734px;height:20px;background:#3c3c3c"></div>
</div>
<div class="r" style="left:576px;top:632px;width:165px;height:21px;background:rgba(85,85,85,0.40);"></div>
<div class="t" style="left:608px;top:638px;color:rgba(30,30,30,0.45);">Rectangular</div>
<div class="r" style="left:6px;top:433px;width:734px;height:447px;overflow:hidden">
<div class="t" style="left:1px;top:5px;width:297px;overflow:hidden;white-space:nowrap;color:#d2d2d2">PostLateUpdate.FinishFrameRendering</div>
<div class="t" style="left:304px;top:5px;width:33px;overflow:hidden;white-space:nowrap;color:#d2d2d2">1</div>
<div class="t" style="left:343px;top:5px;width:32px;overflow:hidden;white-space:nowrap;color:#d2d2d2">16.66</div>
<div class="t" style="left:420px;top:5px;width:33px;overflow:hidden;white-space:nowrap;color:#d2d2d2">16.78</div>
<div class="t" style="left:459px;top:5px;width:33px;overflow:hidden;white-space:nowrap;color:#d2d2d2">15.79</div>
<div class="t" style="left:498px;top:5px;width:33px;overflow:hidden;white-space:nowrap;color:#d2d2d2">28.64</div>
<div class="t" style="left:536px;top:5px;width:33px;overflow:hidden;white-space:nowrap;color:#d2d2d2">12.85</div>
<div class="t" style="left:575px;top:5px;width:33px;overflow:hidden;white-space:nowrap;color:#d2d2d2">298</div>
<div class="t" style="left:614px;top:5px;width:48px;overflow:hidden;white-space:nowrap;color:#d2d2d2">1</div>
<div class="t" style="left:668px;top:5px;width:64px;overflow:hidden;white-space:nowrap;color:#d2d2d2">16.11</div>
<div class="r" style="left:380px;top:3px;width:33px;height:15px;background:#f2f2f2"></div>
<div class="t" style="left:1px;top:25px;width:297px;overflow:hidden;white-space:nowrap;color:#d2d2d2">RenderPipelineManager.DoRenderLoop_Internal()</div>
<div class="t" style="left:304px;top:25px;width:33px;overflow:hidden;white-space:nowrap;color:#d2d2d2">2</div>
<div class="t" style="left:343px;top:25px;width:32px;overflow:hidden;white-space:nowrap;color:#d2d2d2">16.12</div>
<div class="t" style="left:420px;top:25px;width:33px;overflow:hidden;white-space:nowrap;color:#d2d2d2">16.24</div>
<div class="t" style="left:459px;top:25px;width:33px;overflow:hidden;white-space:nowrap;color:#d2d2d2">15.27</div>
<div class="t" style="left:498px;top:25px;width:33px;overflow:hidden;white-space:nowrap;color:#d2d2d2">28.12</div>
<div class="t" style="left:536px;top:25px;width:33px;overflow:hidden;white-space:nowrap;color:#d2d2d2">12.85</div>
<div class="t" style="left:575px;top:25px;width:33px;overflow:hidden;white-space:nowrap;color:#d2d2d2">298</div>
<div class="t" style="left:614px;top:25px;width:48px;overflow:hidden;white-space:nowrap;color:#d2d2d2">1</div>
<div class="t" style="left:668px;top:25px;width:64px;overflow:hidden;white-space:nowrap;color:#d2d2d2">15.63</div>
<div class="r" style="left:380px;top:23px;width:32px;height:15px;background:#f2f2f2"></div>
<div class="t" style="left:1px;top:45px;width:297px;overflow:hidden;white-space:nowrap;color:#d2d2d2">GC.Collect</div>
<div class="t" style="left:304px;top:45px;width:33px;overflow:hidden;white-space:nowrap;color:#d2d2d2">5-6</div>
<div class="t" style="left:343px;top:45px;width:32px;overflow:hidden;white-space:nowrap;color:#d2d2d2">10.61</div>
<div class="t" style="left:420px;top:45px;width:33px;overflow:hidden;white-space:nowrap;color:#d2d2d2">10.73</div>
<div class="t" style="left:459px;top:45px;width:33px;overflow:hidden;white-space:nowrap;color:#d2d2d2">10.61</div>
<div class="t" style="left:498px;top:45px;width:33px;overflow:hidden;white-space:nowrap;color:#d2d2d2">10.86</div>
<div class="t" style="left:536px;top:45px;width:33px;overflow:hidden;white-space:nowrap;color:#d2d2d2">0.25</div>
<div class="t" style="left:575px;top:45px;width:33px;overflow:hidden;white-space:nowrap;color:#d2d2d2">2</div>
<div class="t" style="left:614px;top:45px;width:48px;overflow:hidden;white-space:nowrap;color:#d2d2d2">1</div>
<div class="t" style="left:668px;top:45px;width:64px;overflow:hidden;white-space:nowrap;color:#d2d2d2">0.00</div>
<div class="r" style="left:380px;top:43px;width:21px;height:15px;background:#f2f2f2"></div>
<div class="t" style="left:1px;top:65px;width:297px;overflow:hidden;white-space:nowrap;color:#d2d2d2">C#_HDRenderPipelineRender</div>
<div class="t" style="left:304px;top:65px;width:33px;overflow:hidden;white-space:nowrap;color:#d2d2d2">3</div>
<div class="t" style="left:343px;top:65px;width:32px;overflow:hidden;white-space:nowrap;color:#d2d2d2">10.11</div>
<div class="t" style="left:420px;top:65px;width:33px;overflow:hidden;white-space:nowrap;color:#d2d2d2">10.22</div>
<div class="t" style="left:459px;top:65px;width:33px;overflow:hidden;white-space:nowrap;color:#d2d2d2">9.46</div>
<div class="t" style="left:498px;top:65px;width:33px;overflow:hidden;white-space:nowrap;color:#d2d2d2">22.47</div>
<div class="t" style="left:536px;top:65px;width:33px;overflow:hidden;white-space:nowrap;color:#d2d2d2">13.00</div>
<div class="t" style="left:575px;top:65px;width:33px;overflow:hidden;white-space:nowrap;color:#d2d2d2">298</div>
<div class="t" style="left:614px;top:65px;width:48px;overflow:hidden;white-space:nowrap;color:#d2d2d2">1</div>
<div class="t" style="left:668px;top:65px;width:64px;overflow:hidden;white-space:nowrap;color:#d2d2d2">9.85</div>
<div class="r" style="left:380px;top:63px;width:20px;height:15px;background:#f2f2f2"></div>
<div class="t" style="left:1px;top:85px;width:297px;overflow:hidden;white-space:nowrap;color:#d2d2d2">WaitForJobGroupID</div>
<div class="t" style="left:304px;top:85px;width:33px;overflow:hidden;white-space:nowrap;color:#d2d2d2">2-9</div>
<div class="t" style="left:343px;top:85px;width:32px;overflow:hidden;white-space:nowrap;color:#d2d2d2">7.77</div>
<div class="t" style="left:420px;top:85px;width:33px;overflow:hidden;white-space:nowrap;color:#d2d2d2">7.88</div>
<div class="t" style="left:459px;top:85px;width:33px;overflow:hidden;white-space:nowrap;color:#d2d2d2">6.83</div>
<div class="t" style="left:498px;top:85px;width:33px;overflow:hidden;white-space:nowrap;color:#d2d2d2">13.50</div>
<div class="t" style="left:536px;top:85px;width:33px;overflow:hidden;white-space:nowrap;color:#d2d2d2">6.67</div>
<div class="t" style="left:575px;top:85px;width:33px;overflow:hidden;white-space:nowrap;color:#d2d2d2">8869</div>
<div class="t" style="left:614px;top:85px;width:48px;overflow:hidden;white-space:nowrap;color:#d2d2d2">30</div>
<div class="t" style="left:668px;top:85px;width:64px;overflow:hidden;white-space:nowrap;color:#d2d2d2">7.31</div>
<div class="r" style="left:380px;top:83px;width:15px;height:15px;background:#f2f2f2"></div>
<div class="t" style="left:1px;top:105px;width:297px;overflow:hidden;white-space:nowrap;color:#d2d2d2">PreLateUpdate.EndGraphicsJobsLate</div>
<div class="t" style="left:304px;top:105px;width:33px;overflow:hidden;white-space:nowrap;color:#d2d2d2">1</div>
<div class="t" style="left:343px;top:105px;width:32px;overflow:hidden;white-space:nowrap;color:#d2d2d2">7.07</div>
<div class="t" style="left:420px;top:105px;width:33px;overflow:hidden;white-space:nowrap;color:#d2d2d2">6.71</div>
<div class="t" style="left:459px;top:105px;width:33px;overflow:hidden;white-space:nowrap;color:#d2d2d2">0.67</div>
<div class="t" style="left:498px;top:105px;width:33px;overflow:hidden;white-space:nowrap;color:#d2d2d2">10.54</div>
<div class="t" style="left:536px;top:105px;width:33px;overflow:hidden;white-space:nowrap;color:#d2d2d2">9.87</div>
<div class="t" style="left:575px;top:105px;width:33px;overflow:hidden;white-space:nowrap;color:#d2d2d2">298</div>
<div class="t" style="left:614px;top:105px;width:48px;overflow:hidden;white-space:nowrap;color:#d2d2d2">1</div>
<div class="t" style="left:668px;top:105px;width:64px;overflow:hidden;white-space:nowrap;color:#d2d2d2">6.53</div>
<div class="r" style="left:380px;top:103px;width:14px;height:15px;background:#f2f2f2"></div>
<div class="t" style="left:1px;top:125px;width:297px;overflow:hidden;white-space:nowrap;color:#d2d2d2">C#_CullResultsCull</div>
<div class="t" style="left:304px;top:125px;width:33px;overflow:hidden;white-space:nowrap;color:#d2d2d2">4</div>
<div class="t" style="left:343px;top:125px;width:32px;overflow:hidden;white-space:nowrap;color:#d2d2d2">5.78</div>
<div class="t" style="left:420px;top:125px;width:33px;overflow:hidden;white-space:nowrap;color:#d2d2d2">5.84</div>
<div class="t" style="left:459px;top:125px;width:33px;overflow:hidden;white-space:nowrap;color:#d2d2d2">5.20</div>
<div class="t" style="left:498px;top:125px;width:33px;overflow:hidden;white-space:nowrap;color:#d2d2d2">7.02</div>
<div class="t" style="left:536px;top:125px;width:33px;overflow:hidden;white-space:nowrap;color:#d2d2d2">1.82</div>
<div class="t" style="left:575px;top:125px;width:33px;overflow:hidden;white-space:nowrap;color:#d2d2d2">298</div>
<div class="t" style="left:614px;top:125px;width:48px;overflow:hidden;white-space:nowrap;color:#d2d2d2">1</div>
<div class="t" style="left:668px;top:125px;width:64px;overflow:hidden;white-space:nowrap;color:#d2d2d2">5.53</div>
<div class="r" style="left:380px;top:123px;width:11px;height:15px;background:#f2f2f2"></div>
<div class="t" style="left:1px;top:145px;width:297px;overflow:hidden;white-space:nowrap;color:#d2d2d2">CullScriptable</div>
<div class="t" style="left:304px;top:145px;width:33px;overflow:hidden;white-space:nowrap;color:#d2d2d2">5</div>
<div class="t" style="left:343px;top:145px;width:32px;overflow:hidden;white-space:nowrap;color:#d2d2d2">5.71</div>
<div class="t" style="left:420px;top:145px;width:33px;overflow:hidden;white-space:nowrap;color:#d2d2d2">5.76</div>
<div class="t" style="left:459px;top:145px;width:33px;overflow:hidden;white-space:nowrap;color:#d2d2d2">5.13</div>
<div class="t" style="left:498px;top:145px;width:33px;overflow:hidden;white-space:nowrap;color:#d2d2d2">6.95</div>
<div class="t" style="left:536px;top:145px;width:33px;overflow:hidden;white-space:nowrap;color:#d2d2d2">1.83</div>
<div class="t" style="left:575px;top:145px;width:33px;overflow:hidden;white-space:nowrap;color:#d2d2d2">298</div>
<div class="t" style="left:614px;top:145px;width:48px;overflow:hidden;white-space:nowrap;color:#d2d2d2">1</div>
<div class="t" style="left:668px;top:145px;width:64px;overflow:hidden;white-space:nowrap;color:#d2d2d2">5.47</div>
<div class="r" style="left:380px;top:143px;width:11px;height:15px;background:#f2f2f2"></div>
<div class="t" style="left:1px;top:165px;width:297px;overflow:hidden;white-space:nowrap;color:#d2d2d2">RenderLoop.Draw</div>
<div class="t" style="left:304px;top:165px;width:33px;overflow:hidden;white-space:nowrap;color:#d2d2d2">3-9</div>
<div class="t" style="left:343px;top:165px;width:32px;overflow:hidden;white-space:nowrap;color:#d2d2d2">5.12</div>
<div class="t" style="left:420px;top:165px;width:33px;overflow:hidden;white-space:nowrap;color:#d2d2d2">3.86</div>
<div class="t" style="left:459px;top:165px;width:33px;overflow:hidden;white-space:nowrap;color:#d2d2d2">0.06</div>
<div class="t" style="left:498px;top:165px;width:33px;overflow:hidden;white-space:nowrap;color:#d2d2d2">7.13</div>
<div class="t" style="left:536px;top:165px;width:33px;overflow:hidden;white-space:nowrap;color:#d2d2d2">7.08</div>
<div class="t" style="left:575px;top:165px;width:33px;overflow:hidden;white-space:nowrap;color:#d2d2d2">27</div>
<div class="t" style="left:614px;top:165px;width:48px;overflow:hidden;white-space:nowrap;color:#d2d2d2">1</div>
<div class="t" style="left:668px;top:165px;width:64px;overflow:hidden;white-space:nowrap;color:#d2d2d2">0.00</div>
<div class="r" style="left:380px;top:163px;width:10px;height:15px;background:#f2f2f2"></div>
<div class="t" style="left:1px;top:185px;width:297px;overflow:hidden;white-space:nowrap;color:#d2d2d2">Update.ScriptRunBehaviourUpdate</div>
<div class="t" style="left:304px;top:185px;width:33px;overflow:hidden;white-space:nowrap;color:#d2d2d2">1</div>
<div class="t" style="left:343px;top:185px;width:32px;overflow:hidden;white-space:nowrap;color:#d2d2d2">3.42</div>
<div class="t" style="left:420px;top:185px;width:33px;overflow:hidden;white-space:nowrap;color:#d2d2d2">3.52</div>
<div class="t" style="left:459px;top:185px;width:33px;overflow:hidden;white-space:nowrap;color:#d2d2d2">1.96</div>
<div class="t" style="left:498px;top:185px;width:33px;overflow:hidden;white-space:nowrap;color:#d2d2d2">8.55</div>
<div class="t" style="left:536px;top:185px;width:33px;overflow:hidden;white-space:nowrap;color:#d2d2d2">6.59</div>
<div class="t" style="left:575px;top:185px;width:33px;overflow:hidden;white-space:nowrap;color:#d2d2d2">298</div>
<div class="t" style="left:614px;top:185px;width:48px;overflow:hidden;white-space:nowrap;color:#d2d2d2">1</div>
<div class="t" style="left:668px;top:185px;width:64px;overflow:hidden;white-space:nowrap;color:#d2d2d2">3.23</div>
<div class="r" style="left:380px;top:183px;width:7px;height:15px;background:#f2f2f2"></div>
<div class="t" style="left:1px;top:205px;width:297px;overflow:hidden;white-space:nowrap;color:#d2d2d2">BehaviourUpdate</div>
<div class="t" style="left:304px;top:205px;width:33px;overflow:hidden;white-space:nowrap;color:#d2d2d2">2</div>
<div class="t" style="left:343px;top:205px;width:32px;overflow:hidden;white-space:nowrap;color:#d2d2d2">3.42</div>
<div class="t" style="left:420px;top:205px;width:33px;overflow:hidden;white-space:nowrap;color:#d2d2d2">3.52</div>
<div class="t" style="left:459px;top:205px;width:33px;overflow:hidden;white-space:nowrap;color:#d2d2d2">1.96</div>
<div class="t" style="left:498px;top:205px;width:33px;overflow:hidden;white-space:nowrap;color:#d2d2d2">8.55</div>
<div class="t" style="left:536px;top:205px;width:33px;overflow:hidden;white-space:nowrap;color:#d2d2d2">6.59</div>
<div class="t" style="left:575px;top:205px;width:33px;overflow:hidden;white-space:nowrap;color:#d2d2d2">298</div>
<div class="t" style="left:614px;top:205px;width:48px;overflow:hidden;white-space:nowrap;color:#d2d2d2">1</div>
<div class="t" style="left:668px;top:205px;width:64px;overflow:hidden;white-space:nowrap;color:#d2d2d2">3.23</div>
<div class="r" style="left:380px;top:203px;width:7px;height:15px;background:#f2f2f2"></div>
<div class="t" style="left:1px;top:225px;width:297px;overflow:hidden;white-space:nowrap;color:#d2d2d2">Shadows.PrepareDrawShadows</div>
<div class="t" style="left:304px;top:225px;width:33px;overflow:hidden;white-space:nowrap;color:#d2d2d2">3</div>
<div class="t" style="left:343px;top:225px;width:32px;overflow:hidden;white-space:nowrap;color:#d2d2d2">3.18</div>
<div class="t" style="left:420px;top:225px;width:33px;overflow:hidden;white-space:nowrap;color:#d2d2d2">3.17</div>
<div class="t" style="left:459px;top:225px;width:33px;overflow:hidden;white-space:nowrap;color:#d2d2d2">2.81</div>
<div class="t" style="left:498px;top:225px;width:33px;overflow:hidden;white-space:nowrap;color:#d2d2d2">3.64</div>
<div class="t" style="left:536px;top:225px;width:33px;overflow:hidden;white-space:nowrap;color:#d2d2d2">0.83</div>
<div class="t" style="left:575px;top:225px;width:33px;overflow:hidden;white-space:nowrap;color:#d2d2d2">894</div>
<div class="t" style="left:614px;top:225px;width:48px;overflow:hidden;white-space:nowrap;color:#d2d2d2">3</div>
<div class="t" style="left:668px;top:225px;width:64px;overflow:hidden;white-space:nowrap;color:#d2d2d2">2.97</div>
<div class="r" style="left:380px;top:223px;width:6px;height:15px;background:#f2f2f2"></div>
<div class="t" style="left:1px;top:245px;width:297px;overflow:hidden;white-space:nowrap;color:#d2d2d2">CullingGroupSendEvents</div>
<div class="t" style="left:304px;top:245px;width:33px;overflow:hidden;white-space:nowrap;color:#d2d2d2">6</div>
<div class="t" style="left:343px;top:245px;width:32px;overflow:hidden;white-space:nowrap;color:#d2d2d2">3.04</div>
<div class="t" style="left:420px;top:245px;width:33px;overflow:hidden;white-space:nowrap;color:#d2d2d2">3.07</div>
<div class="t" style="left:459px;top:245px;width:33px;overflow:hidden;white-space:nowrap;color:#d2d2d2">2.78</div>
<div class="t" style="left:498px;top:245px;width:33px;overflow:hidden;white-space:nowrap;color:#d2d2d2">3.99</div>
<div class="t" style="left:536px;top:245px;width:33px;overflow:hidden;white-space:nowrap;color:#d2d2d2">1.21</div>
<div class="t" style="left:575px;top:245px;width:33px;overflow:hidden;white-space:nowrap;color:#d2d2d2">298</div>
<div class="t" style="left:614px;top:245px;width:48px;overflow:hidden;white-space:nowrap;color:#d2d2d2">1</div>
<div class="t" style="left:668px;top:245px;width:64px;overflow:hidden;white-space:nowrap;color:#d2d2d2">2.90</div>
<div class="r" style="left:380px;top:243px;width:6px;height:15px;background:#f2f2f2"></div>
<div class="t" style="left:1px;top:265px;width:297px;overflow:hidden;white-space:nowrap;color:#d2d2d2">Game.Update()</div>
<div class="t" style="left:304px;top:265px;width:33px;overflow:hidden;white-space:nowrap;color:#d2d2d2">3</div>
<div class="t" style="left:343px;top:265px;width:32px;overflow:hidden;white-space:nowrap;color:#d2d2d2">2.96</div>
<div class="t" style="left:420px;top:265px;width:33px;overflow:hidden;white-space:nowrap;color:#d2d2d2">3.06</div>
<div class="t" style="left:459px;top:265px;width:33px;overflow:hidden;white-space:nowrap;color:#d2d2d2">1.51</div>
<div class="t" style="left:498px;top:265px;width:33px;overflow:hidden;white-space:nowrap;color:#d2d2d2">8.11</div>
<div class="t" style="left:536px;top:265px;width:33px;overflow:hidden;white-space:nowrap;color:#d2d2d2">6.60</div>
<div class="t" style="left:575px;top:265px;width:33px;overflow:hidden;white-space:nowrap;color:#d2d2d2">298</div>
<div class="t" style="left:614px;top:265px;width:48px;overflow:hidden;white-space:nowrap;color:#d2d2d2">1</div>
<div class="t" style="left:668px;top:265px;width:64px;overflow:hidden;white-space:nowrap;color:#d2d2d2">2.79</div>
<div class="r" style="left:380px;top:263px;width:6px;height:15px;background:#f2f2f2"></div>
<div class="t" style="left:1px;top:285px;width:297px;overflow:hidden;white-space:nowrap;color:#d2d2d2">HDRenderPipeline::Render</div>
<div class="t" style="left:304px;top:285px;width:33px;overflow:hidden;white-space:nowrap;color:#d2d2d2">3</div>
<div class="t" style="left:343px;top:285px;width:32px;overflow:hidden;white-space:nowrap;color:#d2d2d2">2.47</div>
<div class="t" style="left:420px;top:285px;width:33px;overflow:hidden;white-space:nowrap;color:#d2d2d2">2.48</div>
<div class="t" style="left:459px;top:285px;width:33px;overflow:hidden;white-space:nowrap;color:#d2d2d2">2.23</div>
<div class="t" style="left:498px;top:285px;width:33px;overflow:hidden;white-space:nowrap;color:#d2d2d2">2.86</div>
<div class="t" style="left:536px;top:285px;width:33px;overflow:hidden;white-space:nowrap;color:#d2d2d2">0.63</div>
<div class="t" style="left:575px;top:285px;width:33px;overflow:hidden;white-space:nowrap;color:#d2d2d2">298</div>
<div class="t" style="left:614px;top:285px;width:48px;overflow:hidden;white-space:nowrap;color:#d2d2d2">1</div>
<div class="t" style="left:668px;top:285px;width:64px;overflow:hidden;white-space:nowrap;color:#d2d2d2">2.42</div>
<div class="r" style="left:380px;top:283px;width:5px;height:15px;background:#f2f2f2"></div>
<div class="t" style="left:1px;top:305px;width:297px;overflow:hidden;white-space:nowrap;color:#d2d2d2">Unaccounted time between: PostLateUpdate.ProfilerEndFrame</div>
<div class="t" style="left:304px;top:305px;width:33px;overflow:hidden;white-space:nowrap;color:#d2d2d2">1</div>
<div class="t" style="left:343px;top:305px;width:32px;overflow:hidden;white-space:nowrap;color:#d2d2d2">2.10</div>
<div class="t" style="left:420px;top:305px;width:33px;overflow:hidden;white-space:nowrap;color:#d2d2d2">2.30</div>
<div class="t" style="left:459px;top:305px;width:33px;overflow:hidden;white-space:nowrap;color:#d2d2d2">2.10</div>
<div class="t" style="left:498px;top:305px;width:33px;overflow:hidden;white-space:nowrap;color:#d2d2d2">2.50</div>
<div class="t" style="left:536px;top:305px;width:33px;overflow:hidden;white-space:nowrap;color:#d2d2d2">0.41</div>
<div class="t" style="left:575px;top:305px;width:33px;overflow:hidden;white-space:nowrap;color:#d2d2d2">2</div>
<div class="t" style="left:614px;top:305px;width:48px;overflow:hidden;white-space:nowrap;color:#d2d2d2">1</div>
<div class="t" style="left:668px;top:305px;width:64px;overflow:hidden;white-space:nowrap;color:#d2d2d2">0.00</div>
<div class="r" style="left:380px;top:303px;width:4px;height:15px;background:#f2f2f2"></div>
<div class="t" style="left:1px;top:325px;width:297px;overflow:hidden;white-space:nowrap;color:#d2d2d2">PostLateUpdate.ProfilerEndFrame</div>
<div class="t" style="left:304px;top:325px;width:33px;overflow:hidden;white-space:nowrap;color:#d2d2d2">1</div>
<div class="t" style="left:343px;top:325px;width:32px;overflow:hidden;white-space:nowrap;color:#d2d2d2">2.05</div>
<div class="t" style="left:420px;top:325px;width:33px;overflow:hidden;white-space:nowrap;color:#d2d2d2">2.06</div>
<div class="t" style="left:459px;top:325px;width:33px;overflow:hidden;white-space:nowrap;color:#d2d2d2">1.74</div>
<div class="t" style="left:498px;top:325px;width:33px;overflow:hidden;white-space:nowrap;color:#d2d2d2">2.42</div>
<div class="t" style="left:536px;top:325px;width:33px;overflow:hidden;white-space:nowrap;color:#d2d2d2">0.68</div>
<div class="t" style="left:575px;top:325px;width:33px;overflow:hidden;white-space:nowrap;color:#d2d2d2">298</div>
<div class="t" style="left:614px;top:325px;width:48px;overflow:hidden;white-space:nowrap;color:#d2d2d2">1</div>
<div class="t" style="left:668px;top:325px;width:64px;overflow:hidden;white-space:nowrap;color:#d2d2d2">2.14</div>
<div class="r" style="left:380px;top:323px;width:4px;height:15px;background:#f2f2f2"></div>
<div class="t" style="left:1px;top:345px;width:297px;overflow:hidden;white-space:nowrap;color:#d2d2d2">Profiler.CollectGlobalStats</div>
<div class="t" style="left:304px;top:345px;width:33px;overflow:hidden;white-space:nowrap;color:#d2d2d2">2</div>
<div class="t" style="left:343px;top:345px;width:32px;overflow:hidden;white-space:nowrap;color:#d2d2d2">2.05</div>
<div class="t" style="left:420px;top:345px;width:33px;overflow:hidden;white-space:nowrap;color:#d2d2d2">2.05</div>
<div class="t" style="left:459px;top:345px;width:33px;overflow:hidden;white-space:nowrap;color:#d2d2d2">1.73</div>
<div class="t" style="left:498px;top:345px;width:33px;overflow:hidden;white-space:nowrap;color:#d2d2d2">2.41</div>
<div class="t" style="left:536px;top:345px;width:33px;overflow:hidden;white-space:nowrap;color:#d2d2d2">0.68</div>
<div class="t" style="left:575px;top:345px;width:33px;overflow:hidden;white-space:nowrap;color:#d2d2d2">298</div>
<div class="t" style="left:614px;top:345px;width:48px;overflow:hidden;white-space:nowrap;color:#d2d2d2">1</div>
<div class="t" style="left:668px;top:345px;width:64px;overflow:hidden;white-space:nowrap;color:#d2d2d2">2.14</div>
<div class="r" style="left:380px;top:343px;width:4px;height:15px;background:#f2f2f2"></div>
<div class="t" style="left:1px;top:365px;width:297px;overflow:hidden;white-space:nowrap;color:#d2d2d2">CullQueryPortalVisibilityUmbra</div>
<div class="t" style="left:304px;top:365px;width:33px;overflow:hidden;white-space:nowrap;color:#d2d2d2">8</div>
<div class="t" style="left:343px;top:365px;width:32px;overflow:hidden;white-space:nowrap;color:#d2d2d2">1.93</div>
<div class="t" style="left:420px;top:365px;width:33px;overflow:hidden;white-space:nowrap;color:#d2d2d2">1.89</div>
<div class="t" style="left:459px;top:365px;width:33px;overflow:hidden;white-space:nowrap;color:#d2d2d2">1.58</div>
<div class="t" style="left:498px;top:365px;width:33px;overflow:hidden;white-space:nowrap;color:#d2d2d2">3.01</div>
<div class="t" style="left:536px;top:365px;width:33px;overflow:hidden;white-space:nowrap;color:#d2d2d2">1.43</div>
<div class="t" style="left:575px;top:365px;width:33px;overflow:hidden;white-space:nowrap;color:#d2d2d2">473</div>
<div class="t" style="left:614px;top:365px;width:48px;overflow:hidden;white-space:nowrap;color:#d2d2d2">2</div>
<div class="t" style="left:668px;top:365px;width:64px;overflow:hidden;white-space:nowrap;color:#d2d2d2">1.96</div>
<div class="r" style="left:380px;top:363px;width:4px;height:15px;background:#f2f2f2"></div>
<div class="t" style="left:1px;top:385px;width:297px;overflow:hidden;white-space:nowrap;color:#d2d2d2">BatchRenderer.Flush</div>
<div class="t" style="left:304px;top:385px;width:33px;overflow:hidden;white-space:nowrap;color:#d2d2d2">4-10</div>
<div class="t" style="left:343px;top:385px;width:32px;overflow:hidden;white-space:nowrap;color:#d2d2d2">1.76</div>
<div class="t" style="left:420px;top:385px;width:33px;overflow:hidden;white-space:nowrap;color:#d2d2d2">1.51</div>
<div class="t" style="left:459px;top:385px;width:33px;overflow:hidden;white-space:nowrap;color:#d2d2d2">0.00</div>
<div class="t" style="left:498px;top:385px;width:33px;overflow:hidden;white-space:nowrap;color:#d2d2d2">2.60</div>
<div class="t" style="left:536px;top:385px;width:33px;overflow:hidden;white-space:nowrap;color:#d2d2d2">2.60</div>
<div class="t" style="left:575px;top:385px;width:33px;overflow:hidden;white-space:nowrap;color:#d2d2d2">4556</div>
<div class="t" style="left:614px;top:385px;width:48px;overflow:hidden;white-space:nowrap;color:#d2d2d2">217</div>
<div class="t" style="left:668px;top:385px;width:64px;overflow:hidden;white-space:nowrap;color:#d2d2d2">0.00</div>
<div class="r" style="left:380px;top:383px;width:3px;height:15px;background:#f2f2f2"></div>
<div class="t" style="left:1px;top:405px;width:297px;overflow:hidden;white-space:nowrap;color:#d2d2d2">ExtractRenderNodeQueue</div>
<div class="t" style="left:304px;top:405px;width:33px;overflow:hidden;white-space:nowrap;color:#d2d2d2">5-8</div>
<div class="t" style="left:343px;top:405px;width:32px;overflow:hidden;white-space:nowrap;color:#d2d2d2">1.74</div>
<div class="t" style="left:420px;top:405px;width:33px;overflow:hidden;white-space:nowrap;color:#d2d2d2">1.74</div>
<div class="t" style="left:459px;top:405px;width:33px;overflow:hidden;white-space:nowrap;color:#d2d2d2">0.49</div>
<div class="t" style="left:498px;top:405px;width:33px;overflow:hidden;white-space:nowrap;color:#d2d2d2">2.38</div>
<div class="t" style="left:536px;top:405px;width:33px;overflow:hidden;white-space:nowrap;color:#d2d2d2">1.89</div>
<div class="t" style="left:575px;top:405px;width:33px;overflow:hidden;white-space:nowrap;color:#d2d2d2">1392</div>
<div class="t" style="left:614px;top:405px;width:48px;overflow:hidden;white-space:nowrap;color:#d2d2d2">5</div>
<div class="t" style="left:668px;top:405px;width:64px;overflow:hidden;white-space:nowrap;color:#d2d2d2">1.80</div>
<div class="r" style="left:380px;top:403px;width:3px;height:15px;background:#f2f2f2"></div>
<div class="t" style="left:1px;top:425px;width:297px;overflow:hidden;white-space:nowrap;color:#d2d2d2">TransformChangedDispatch</div>
<div class="t" style="left:304px;top:425px;width:33px;overflow:hidden;white-space:nowrap;color:#d2d2d2">2-10</div>
<div class="t" style="left:343px;top:425px;width:32px;overflow:hidden;white-space:nowrap;color:#d2d2d2">1.64</div>
<div class="t" style="left:420px;top:425px;width:33px;overflow:hidden;white-space:nowrap;color:#d2d2d2">1.65</div>
<div class="t" style="left:459px;top:425px;width:33px;overflow:hidden;white-space:nowrap;color:#d2d2d2">0.76</div>
<div class="t" style="left:498px;top:425px;width:33px;overflow:hidden;white-space:nowrap;color:#d2d2d2">6.59</div>
<div class="t" style="left:536px;top:425px;width:33px;overflow:hidden;white-space:nowrap;color:#d2d2d2">5.83</div>
<div class="t" style="left:575px;top:425px;width:33px;overflow:hidden;white-space:nowrap;color:#d2d2d2">4123</div>
<div class="t" style="left:614px;top:425px;width:48px;overflow:hidden;white-space:nowrap;color:#d2d2d2">14</div>
<div class="t" style="left:668px;top:425px;width:64px;overflow:hidden;white-space:nowrap;color:#d2d2d2">1.70</div>
<div class="r" style="left:380px;top:423px;width:3px;height:15px;background:#f2f2f2"></div>
<div class="t" style="left:1px;top:445px;width:297px;overflow:hidden;white-space:nowrap;color:#d2d2d2">ShadowsDraw</div>
<div class="t" style="left:304px;top:445px;width:33px;overflow:hidden;white-space:nowrap;color:#d2d2d2">1-2</div>
<div class="t" style="left:343px;top:445px;width:32px;overflow:hidden;white-space:nowrap;color:#d2d2d2">1.54</div>
<div class="t" style="left:420px;top:445px;width:33px;overflow:hidden;white-space:nowrap;color:#d2d2d2">1.46</div>
<div class="t" style="left:459px;top:445px;width:33px;overflow:hidden;white-space:nowrap;color:#d2d2d2">0.22</div>
<div class="t" style="left:498px;top:445px;width:33px;overflow:hidden;white-space:nowrap;color:#d2d2d2">2.70</div>
<div class="t" style="left:536px;top:445px;width:33px;overflow:hidden;white-space:nowrap;color:#d2d2d2">2.30</div>
<div class="t" style="left:575px;top:445px;width:33px;overflow:hidden;white-space:nowrap;color:#d2d2d2">44</div>
<div class="t" style="left:614px;top:445px;width:48px;overflow:hidden;white-space:nowrap;color:#d2d2d2">2</div>
<div class="t" style="left:668px;top:445px;width:64px;overflow:hidden;white-space:nowrap;color:#d2d2d2">0.00</div>
<div class="r" style="left:380px;top:443px;width:3px;height:15px;background:#f2f2f2"></div>
</div>
<div class="r" style="left:740px;top:433px;width:15px;height:447px;background:#2c2c2c;"></div>
<div class="r" style="left:742px;top:447px;width:12px;height:416px;border-radius:6px;background:#353535"></div>
<div class="r" style="left:742px;top:451px;width:12px;height:34px;border-radius:6px;background:linear-gradient(90deg,#4a4a4a,#585858,#4a4a4a)"></div>
<svg class="r" style="left:743px;top:436px" width="10" height="8"><path d="M1 7 L5 1 L9 7 Z" fill="#3a3a3a"/></svg>
<svg class="r" style="left:743px;top:868px" width="10" height="8"><path d="M1 1 L5 7 L9 1 Z" fill="#3a3a3a"/></svg>
<div class="r" style="left:5px;top:880px;width:751px;height:2px;background:#303030;"></div>
<div class="r" style="left:0px;top:882px;width:1040px;height:2px;background:#262626;"></div>
<div class="r" style="left:24px;top:884px;width:992px;height:2px;background:#2688e6;"></div>
<div class="r" style="left:0px;top:884px;width:24px;height:2px;background:#f0f0f0;"></div>
<div class="r" style="left:1016px;top:884px;width:24px;height:2px;background:#f0f0f0;"></div>
<div class="panel" style="left:760px;top:41px;width:276px;height:295px;"></div>
<svg class="r" style="left:766px;top:48px" width="10" height="9"><path d="M0 0 L9 0 L4.5 8 Z" fill="#6e6e6e"/></svg>
<div class="tb" style="left:778px;top:47px;color:#d4d4d4;">Frame Summary</div>
<div class="t" style="left:765px;top:83px;color:#d2d2d2;">Frame Count</div>
<div class="t" style="left:869px;top:83px;color:#d2d2d2;">300</div>
<div class="t" style="left:765px;top:101px;color:#d2d2d2;">Frame Range</div>
<div class="t" style="left:869px;top:101px;color:#d2d2d2;">1-300</div>
<div class="t" style="left:869px;top:137px;color:#d2d2d2;">ms</div>
<div class="t" style="left:923px;top:137px;color:#d2d2d2;">Frame</div>
<div class="t" style="left:765px;top:155px;color:#d2d2d2;">Max</div>
<div class="t" style="left:869px;top:155px;color:#d2d2d2;">48.92</div>
<div class="btn" style="left:923px;top:154px;width:48px;height:13px;"></div>
<div class="t" style="left:796.5px;width:300px;text-align:center;top:155px;color:#e6e6e6;">197</div>
<div class="t" style="left:765px;top:173px;color:#d2d2d2;">Upper Quartile</div>
<div class="t" style="left:869px;top:173px;color:#d2d2d2;">35.65</div>
<div class="t" style="left:765px;top:191px;color:#d2d2d2;">Median</div>
<div class="t" style="left:869px;top:191px;color:#d2d2d2;">34.57</div>
<div class="btn" style="left:923px;top:190px;width:48px;height:13px;"></div>
<div class="t" style="left:796.5px;width:300px;text-align:center;top:191px;color:#e6e6e6;">42</div>
<div class="t" style="left:765px;top:209px;color:#d2d2d2;">Mean</div>
<div class="t" style="left:869px;top:209px;color:#d2d2d2;">34.39</div>
<div class="t" style="left:765px;top:227px;color:#d2d2d2;">Lower Quartile</div>
<div class="t" style="left:869px;top:227px;color:#d2d2d2;">33.40</div>
<div class="t" style="left:765px;top:245px;color:#d2d2d2;">Min</div>
<div class="t" style="left:869px;top:245px;color:#d2d2d2;">0.00</div>
<div class="btn" style="left:923px;top:244px;width:48px;height:13px;"></div>
<div class="t" style="left:796.5px;width:300px;text-align:center;top:245px;color:#e6e6e6;">231</div>
<svg class="r" style="left:764px;top:273px" width="150" height="40"><rect x="0.00" y="0" width="6.00" height="40" fill="#808080"/><rect x="7.50" y="0" width="6.00" height="40" fill="#808080"/><rect x="15.00" y="0" width="6.00" height="40" fill="#808080"/><rect x="22.50" y="0" width="6.00" height="40" fill="#808080"/><rect x="30.00" y="0" width="6.00" height="40" fill="#808080"/><rect x="37.50" y="0" width="6.00" height="40" fill="#808080"/><rect x="45.00" y="0" width="6.00" height="40" fill="#808080"/><rect x="52.50" y="0" width="6.00" height="40" fill="#808080"/><rect x="60.00" y="0" width="6.00" height="40" fill="#808080"/><rect x="67.50" y="0" width="6.00" height="40" fill="#808080"/><rect x="75.00" y="0" width="6.00" height="40" fill="#808080"/><rect x="82.50" y="0" width="6.00" height="40" fill="#808080"/><rect x="82.50" y="39" width="6.00" height="1" fill="#f2f2f2"/><rect x="90.00" y="0" width="6.00" height="40" fill="#808080"/><rect x="90.00" y="30.5" width="6.00" height="9.5" fill="#f2f2f2"/><rect x="97.50" y="0" width="6.00" height="40" fill="#808080"/><rect x="97.50" y="17" width="6.00" height="23" fill="#f2f2f2"/><rect x="105.00" y="0" width="6.00" height="40" fill="#808080"/><rect x="105.00" y="34" width="6.00" height="6" fill="#f2f2f2"/><rect x="112.50" y="0" width="6.00" height="40" fill="#808080"/><rect x="112.50" y="39" width="6.00" height="1" fill="#f2f2f2"/><rect x="120.00" y="0" width="6.00" height="40" fill="#808080"/><rect x="127.50" y="0" width="6.00" height="40" fill="#808080"/><rect x="135.00" y="0" width="6.00" height="40" fill="#808080"/><rect x="142.50" y="0" width="6.00" height="40" fill="#808080"/></svg>
<div class="t" style="left:765px;top:319px;color:#d2d2d2;">0.00</div>
<div class="t" style="left:613px;width:300px;text-align:right;top:319px;color:#d2d2d2;">48.92</div>
<div class="r boxbg" style="left:925px;top:273px;width:46px;height:40px"></div>
<svg class="r" style="left:925px;top:273px" width="46" height="40"><path d="M22.5 0 V40 M17 0.5 H29 M17 39.5 H29" stroke="#f2f2f2" stroke-width="1"/><rect x="11" y="11" width="24" height="3" fill="#f2f2f2"/></svg>
<div class="t" style="left:723px;width:300px;text-align:right;top:275px;color:#d2d2d2;">48.92</div>
<div class="t" style="left:723px;width:300px;text-align:right;top:305px;color:#d2d2d2;">0.00</div>
<div class="panel" style="left:760px;top:340px;width:276px;height:22px;"></div>
<svg class="r" style="left:767px;top:346px" width="9" height="10"><path d="M0 0 L8 4.5 L0 9 Z" fill="#6e6e6e"/></svg>
<div class="tb" style="left:778px;top:346px;color:#d4d4d4;">Thread Summary</div>
<div class="panel" style="left:760px;top:366px;width:276px;height:513px;"></div>
<svg class="r" style="left:766px;top:373px" width="10" height="9"><path d="M0 0 L9 0 L4.5 8 Z" fill="#6e6e6e"/></svg>
<div class="tb" style="left:778px;top:372px;color:#d4d4d4;">Marker Summary</div>
<div class="t" style="left:765px;top:390px;color:#d2d2d2;">C#_CullResultsCull</div>
<div class="t" style="left:765px;top:408px;color:#d2d2d2;">Mean frame contribution</div>
<div class="r" style="left:764px;top:443px;width:100px;height:11px;background:#808080;"></div>
<div class="r" style="left:764px;top:443px;width:17px;height:11px;background:#f2f2f2;"></div>
<div class="t" style="left:869px;top:444px;color:#d2d2d2;">16.99%</div>
<div class="t" style="left:765px;top:466px;color:#d2d2d2;">First frame</div>
<div class="btn" style="left:923px;top:465px;width:48px;height:13px;"></div>
<div class="t" style="left:796.5px;width:300px;text-align:center;top:466px;color:#e6e6e6;">1</div>
<div class="t" style="left:765px;top:484px;color:#d2d2d2;">Top</div>
<div class="btn" style="left:799px;top:482px;width:28px;height:14px;"></div>
<div class="t" style="left:805px;top:484px;color:#e6e6e6;">3</div>
<svg class="r" style="left:816.5px;top:484.5px" width="5" height="9"><path d="M0.5 3.5 L2.5 0.5 L4.5 3.5 Z" fill="#8a8a8a"/><path d="M0.5 5.5 L2.5 8.5 L4.5 5.5 Z" fill="#a8a8a8"/></svg>
<div class="t" style="left:836.5px;top:484px;color:#d2d2d2;">by frame costs</div>
<div class="r" style="left:764px;top:501px;width:100px;height:11px;background:#808080;"></div>
<div class="r" style="left:764px;top:501px;width:100px;height:11px;background:#f2f2f2;"></div>
<div class="t" style="left:869px;top:502px;color:#d2d2d2;">7.02ms</div>
<div class="btn" style="left:923px;top:501px;width:48px;height:13px;"></div>
<div class="t" style="left:796.5px;width:300px;text-align:center;top:502px;color:#e6e6e6;">266</div>
<div class="r" style="left:764px;top:519px;width:100px;height:11px;background:#808080;"></div>
<div class="r" style="left:764px;top:519px;width:100px;height:11px;background:#f2f2f2;"></div>
<div class="t" style="left:869px;top:520px;color:#d2d2d2;">7.02ms</div>
<div class="btn" style="left:923px;top:519px;width:48px;height:13px;"></div>
<div class="t" style="left:796.5px;width:300px;text-align:center;top:520px;color:#e6e6e6;">283</div>
<div class="r" style="left:764px;top:537px;width:100px;height:11px;background:#808080;"></div>
<div class="r" style="left:764px;top:537px;width:96px;height:11px;background:#f2f2f2;"></div>
<div class="t" style="left:869px;top:538px;color:#d2d2d2;">6.74ms</div>
<div class="btn" style="left:923px;top:537px;width:48px;height:13px;"></div>
<div class="t" style="left:796.5px;width:300px;text-align:center;top:538px;color:#e6e6e6;">274</div>
<svg class="r" style="left:764px;top:568px" width="150" height="100"><rect x="0.00" y="0" width="6.00" height="100" fill="#808080"/><rect x="0.00" y="98" width="6.00" height="2" fill="#f2f2f2"/><rect x="7.50" y="0" width="6.00" height="100" fill="#808080"/><rect x="7.50" y="96" width="6.00" height="4" fill="#f2f2f2"/><rect x="15.00" y="0" width="6.00" height="100" fill="#808080"/><rect x="15.00" y="96" width="6.00" height="4" fill="#f2f2f2"/><rect x="22.50" y="0" width="6.00" height="100" fill="#808080"/><rect x="22.50" y="88" width="6.00" height="12" fill="#f2f2f2"/><rect x="30.00" y="0" width="6.00" height="100" fill="#808080"/><rect x="30.00" y="89" width="6.00" height="11" fill="#f2f2f2"/><rect x="37.50" y="0" width="6.00" height="100" fill="#808080"/><rect x="37.50" y="85" width="6.00" height="15" fill="#f2f2f2"/><rect x="45.00" y="0" width="6.00" height="100" fill="#808080"/><rect x="45.00" y="89" width="6.00" height="11" fill="#f2f2f2"/><rect x="52.50" y="0" width="6.00" height="100" fill="#808080"/><rect x="52.50" y="91" width="6.00" height="9" fill="#f2f2f2"/><rect x="60.00" y="0" width="6.00" height="100" fill="#808080"/><rect x="60.00" y="91" width="6.00" height="9" fill="#f2f2f2"/><rect x="67.50" y="0" width="6.00" height="100" fill="#808080"/><rect x="67.50" y="93" width="6.00" height="7" fill="#f2f2f2"/><rect x="75.00" y="0" width="6.00" height="100" fill="#808080"/><rect x="75.00" y="94.5" width="6.00" height="5.5" fill="#f2f2f2"/><rect x="82.50" y="0" width="6.00" height="100" fill="#808080"/><rect x="82.50" y="97" width="6.00" height="3" fill="#f2f2f2"/><rect x="90.00" y="0" width="6.00" height="100" fill="#808080"/><rect x="90.00" y="98" width="6.00" height="2" fill="#f2f2f2"/><rect x="97.50" y="0" width="6.00" height="100" fill="#808080"/><rect x="97.50" y="98" width="6.00" height="2" fill="#f2f2f2"/><rect x="105.00" y="0" width="6.00" height="100" fill="#808080"/><rect x="105.00" y="99" width="6.00" height="1" fill="#f2f2f2"/><rect x="112.50" y="0" width="6.00" height="100" fill="#808080"/><rect x="112.50" y="99" width="6.00" height="1" fill="#f2f2f2"/><rect x="120.00" y="0" width="6.00" height="100" fill="#808080"/><rect x="127.50" y="0" width="6.00" height="100" fill="#808080"/><rect x="135.00" y="0" width="6.00" height="100" fill="#808080"/><rect x="142.50" y="0" width="6.00" height="100" fill="#808080"/></svg>
<div class="t" style="left:765px;top:674px;color:#d2d2d2;">5.20</div>
<div class="t" style="left:613px;width:300px;text-align:right;top:674px;color:#d2d2d2;">7.02</div>
<div class="r boxbg" style="left:925px;top:568px;width:46px;height:100px"></div>
<svg class="r" style="left:925px;top:568px" width="46" height="100"><path d="M22.5 0 V55 M22.5 78 V100 M17 0.5 H29 M17 99.5 H29" stroke="#f2f2f2" stroke-width="1"/><rect x="11.5" y="55.5" width="23" height="22" fill="#6a6a6a" stroke="#f2f2f2" stroke-width="1"/><rect x="11" y="67" width="24" height="2" fill="#f2f2f2"/></svg>
<div class="t" style="left:723px;width:300px;text-align:right;top:569px;color:#d2d2d2;">7.02</div>
<div class="t" style="left:723px;width:300px;text-align:right;top:660px;color:#d2d2d2;">5.20</div>
<div class="t" style="left:869px;top:706px;color:#d2d2d2;">ms</div>
<div class="t" style="left:923px;top:706px;color:#d2d2d2;">Frame</div>
<div class="t" style="left:765px;top:724px;color:#d2d2d2;">Max</div>
<div class="t" style="left:869px;top:724px;color:#d2d2d2;">7.02</div>
<div class="btn" style="left:923px;top:723px;width:48px;height:13px;"></div>
<div class="t" style="left:796.5px;width:300px;text-align:center;top:724px;color:#e6e6e6;">266</div>
<div class="t" style="left:765px;top:742px;color:#d2d2d2;">Upper Quartile</div>
<div class="t" style="left:869px;top:742px;color:#d2d2d2;">6.03</div>
<div class="t" style="left:765px;top:760px;color:#d2d2d2;">Median</div>
<div class="t" style="left:869px;top:760px;color:#d2d2d2;">5.78</div>
<div class="btn" style="left:923px;top:759px;width:48px;height:13px;"></div>
<div class="t" style="left:796.5px;width:300px;text-align:center;top:760px;color:#e6e6e6;">218</div>
<div class="t" style="left:765px;top:778px;color:#d2d2d2;">Mean</div>
<div class="t" style="left:869px;top:778px;color:#d2d2d2;">5.84</div>
<div class="t" style="left:765px;top:796px;color:#d2d2d2;">Lower Quartile</div>
<div class="t" style="left:869px;top:796px;color:#d2d2d2;">5.61</div>
<div class="t" style="left:765px;top:814px;color:#d2d2d2;">Min</div>
<div class="t" style="left:869px;top:814px;color:#d2d2d2;">5.20</div>
<div class="btn" style="left:923px;top:813px;width:48px;height:13px;"></div>
<div class="t" style="left:796.5px;width:300px;text-align:center;top:814px;color:#e6e6e6;">70</div>
<div class="t" style="left:765px;top:845px;color:#d2d2d2;">Individual Max</div>
<div class="t" style="left:869px;top:845px;color:#d2d2d2;">7.02</div>
<div class="btn" style="left:923px;top:844px;width:48px;height:13px;"></div>
<div class="t" style="left:796.5px;width:300px;text-align:center;top:845px;color:#e6e6e6;">266</div>
<div class="t" style="left:765px;top:863px;color:#d2d2d2;">Individual Min</div>
<div class="t" style="left:869px;top:863px;color:#d2d2d2;">5.20</div>
<div class="btn" style="left:923px;top:862px;width:48px;height:13px;"></div>
<div class="t" style="left:796.5px;width:300px;text-align:center;top:863px;color:#e6e6e6;">70</div></div></body></html>
